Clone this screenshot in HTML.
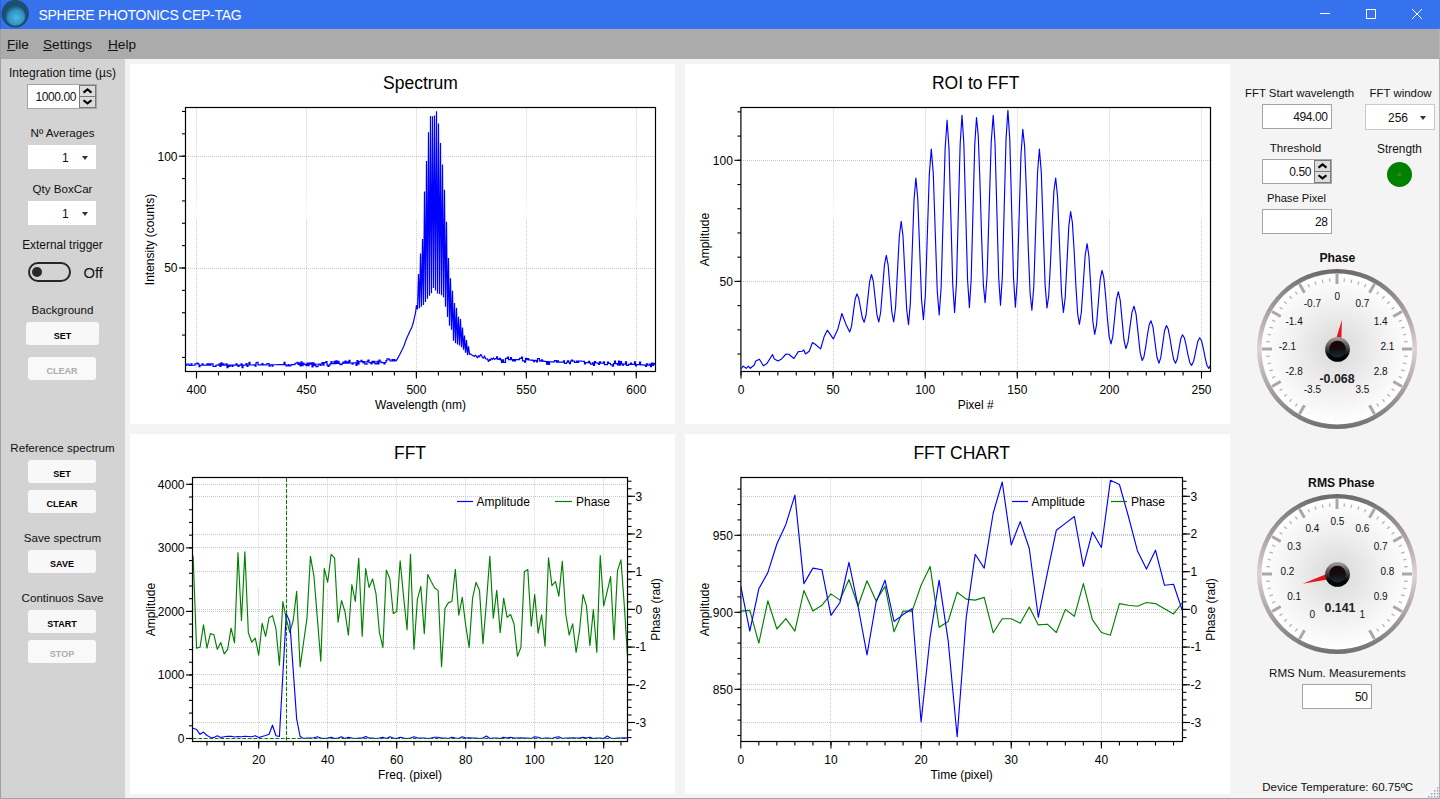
<!DOCTYPE html><html><head><meta charset="utf-8"><title>SPHERE PHOTONICS CEP-TAG</title><style>
*{margin:0;padding:0;box-sizing:border-box}
html,body{width:1440px;height:799px;overflow:hidden;background:#f3f3f3;font-family:"Liberation Sans",sans-serif}
.a{position:absolute}
.lbl{position:absolute;font-size:12px;color:#111;white-space:nowrap;line-height:14px}
.inp{position:absolute;background:#fff;border:1px solid #a4a4a4;font-size:12px;color:#111;text-align:right;line-height:24.5px;padding-right:3.5px;letter-spacing:-0.4px}
.cmb{position:absolute;background:#fff;font-size:12px;color:#111;line-height:24px}
.btn{position:absolute;background:#f8f8f8;border-radius:3px;font-size:9px;font-weight:bold;color:#000;text-align:center;line-height:29.4px;overflow:hidden}
.dis{color:#acacac;background:#f9f9f9}
.tri{position:absolute;width:0;height:0;border-left:3.7px solid transparent;border-right:3.7px solid transparent;border-top:4.4px solid #333}
</style></head><body>
<div class="a" style="left:0;top:0;width:1440px;height:29px;background:#3672ee"></div>
<div class="a" style="left:38.5px;top:6.5px;font-size:14px;color:#fff;white-space:nowrap;letter-spacing:-0.28px">SPHERE PHOTONICS CEP-TAG</div>
<div class="a" style="left:0;top:29px;width:1440px;height:30px;background:#ababab"></div>
<div class="a" style="left:7px;top:36.6px;font-size:13.6px;color:#111;white-space:nowrap"><u>F</u>ile</div>
<div class="a" style="left:43px;top:36.6px;font-size:13.6px;color:#111;white-space:nowrap"><u>S</u>ettings</div>
<div class="a" style="left:108px;top:36.6px;font-size:13.6px;color:#111;white-space:nowrap"><u>H</u>elp</div>
<div class="a" style="left:0;top:59px;width:125px;height:740px;background:#d3d3d3"></div>
<div class="a" style="left:130px;top:64px;width:545px;height:360px;background:#fff"></div>
<div class="a" style="left:685px;top:64px;width:545px;height:360px;background:#fff"></div>
<div class="a" style="left:130px;top:434px;width:545px;height:360px;background:#fff"></div>
<div class="a" style="left:685px;top:434px;width:545px;height:360px;background:#fff"></div>
<div class="a" style="left:1230px;top:59px;width:210px;height:740px;background:#f4f4f4"></div>
<div class="lbl" style="left:62.5px;top:65.9px;width:0;display:flex;justify-content:center;font-size:12px"><span>Integration time (µs)</span></div>
<div class="inp" style="left:27px;top:84px;width:53px;height:25px;border-right:none;padding-right:4px;line-height:24px">1000.00</div>
<div class="a" style="left:79px;top:84px;width:18px;height:25px;background:#a6a6a6"></div>
<div class="a" style="left:79px;top:85px;width:17px;height:23px;background:#dcdcdc;border:1px solid #7a7a7a"></div>
<div class="a" style="left:79px;top:96px;width:17px;height:1px;background:#7a7a7a"></div>
<div class="lbl" style="left:62.5px;top:126.4px;width:0;display:flex;justify-content:center;font-size:11.6px"><span>Nº Averages</span></div>
<div class="cmb" style="left:28px;top:145px;width:68px;height:24px"><span class="a" style="left:34px;top:0.5px">1</span></div>
<div class="tri" style="left:82px;top:156px"></div>
<div class="lbl" style="left:62.5px;top:181.8px;width:0;display:flex;justify-content:center;font-size:11.6px"><span>Qty BoxCar</span></div>
<div class="cmb" style="left:28px;top:201px;width:68px;height:24px"><span class="a" style="left:34px;top:0.5px">1</span></div>
<div class="tri" style="left:82px;top:212px"></div>
<div class="lbl" style="left:62.5px;top:238px;width:0;display:flex;justify-content:center;font-size:11.9px"><span>External trigger</span></div>
<div class="a" style="left:28px;top:262px;width:43px;height:20px;border:2px solid #262626;border-radius:10px"></div>
<div class="a" style="left:32px;top:267px;width:10px;height:10px;border-radius:5px;background:#2a2a2a"></div>
<div class="a" style="left:83.5px;top:264.5px;font-size:14.8px;color:#111;line-height:17px">Off</div>
<div class="lbl" style="left:62.5px;top:302.9px;width:0;display:flex;justify-content:center;font-size:11.6px"><span>Background</span></div>
<div class="btn" style="left:26px;top:322px;width:73px;height:23px">SET</div>
<div class="btn dis" style="left:28px;top:357px;width:68px;height:23px">CLEAR</div>
<div class="lbl" style="left:62.5px;top:441.2px;width:0;display:flex;justify-content:center;font-size:11.6px"><span>Reference spectrum</span></div>
<div class="btn" style="left:28px;top:460px;width:68px;height:23px">SET</div>
<div class="btn" style="left:28px;top:490px;width:68px;height:23px">CLEAR</div>
<div class="lbl" style="left:62.5px;top:530.9px;width:0;display:flex;justify-content:center;font-size:11.6px"><span>Save spectrum</span></div>
<div class="btn" style="left:28px;top:550px;width:68px;height:23px">SAVE</div>
<div class="lbl" style="left:62.5px;top:590.8px;width:0;display:flex;justify-content:center;font-size:11.6px"><span>Continuos Save</span></div>
<div class="btn" style="left:28px;top:610px;width:68px;height:23px">START</div>
<div class="btn dis" style="left:28px;top:640px;width:68px;height:23px">STOP</div>
<div class="lbl" style="left:1299.5px;top:85.8px;width:0;display:flex;justify-content:center;font-size:11.45px"><span>FFT Start wavelength</span></div>
<div class="inp" style="left:1262px;top:104px;width:70px;height:25px">494.00</div>
<div class="lbl" style="left:1400.5px;top:85.8px;width:0;display:flex;justify-content:center;font-size:11.45px"><span>FFT window</span></div>
<div class="cmb" style="left:1365px;top:104px;width:70px;height:26px;border:1px solid #c8c8c8;line-height:24px"><span class="a" style="left:22px;top:1px">256</span></div>
<div class="tri" style="left:1419.5px;top:116px"></div>
<div class="lbl" style="left:1295.5px;top:141.1px;width:0;display:flex;justify-content:center;font-size:11.6px"><span>Threshold</span></div>
<div class="inp" style="left:1262px;top:159px;width:53px;height:25px;border-right:none;padding-right:4px;line-height:24px">0.50</div>
<div class="a" style="left:1314px;top:159px;width:18px;height:25px;background:#a6a6a6"></div>
<div class="a" style="left:1314px;top:160px;width:17px;height:23px;background:#dcdcdc;border:1px solid #7a7a7a"></div>
<div class="a" style="left:1314px;top:171px;width:17px;height:1px;background:#7a7a7a"></div>
<div class="lbl" style="left:1399.5px;top:142.2px;width:0;display:flex;justify-content:center;font-size:11.85px"><span>Strength</span></div>
<div class="lbl" style="left:1296.5px;top:190.7px;width:0;display:flex;justify-content:center;font-size:11.2px"><span>Phase Pixel</span></div>
<div class="inp" style="left:1262px;top:209px;width:70px;height:25px">28</div>
<div class="lbl" style="left:1337.4px;top:665.9px;width:0;display:flex;justify-content:center;font-size:11.6px"><span>RMS Num. Measurements</span></div>
<div class="inp" style="left:1302px;top:684px;width:70px;height:25px">50</div>
<div class="lbl" style="left:1337.7px;top:780.4px;width:0;display:flex;justify-content:center;font-size:11.55px"><span>Device Temperature: 60.75ºC</span></div>
<svg class="a" style="left:0;top:0;font-family:&quot;Liberation Sans&quot;,sans-serif" width="1440" height="799" viewBox="0 0 1440 799">
<defs>
<linearGradient id="vg" x1="0" y1="0" x2="0" y2="1"><stop offset="0" stop-color="#e6e6e6"/><stop offset="0.7" stop-color="#eeeeee"/><stop offset="1" stop-color="#ffffff"/></linearGradient>
<linearGradient id="ring" x1="0" y1="0" x2="0" y2="1"><stop offset="0" stop-color="#6c6868"/><stop offset="0.5" stop-color="#dfd2d2"/><stop offset="1" stop-color="#707070"/></linearGradient>
<radialGradient id="face" cx="0.5" cy="0.5" r="0.5"><stop offset="0" stop-color="#d8d8d8"/><stop offset="0.55" stop-color="#efefef"/><stop offset="1" stop-color="#ffffff"/></radialGradient>
<linearGradient id="hubring" x1="0" y1="0" x2="0" y2="1"><stop offset="0" stop-color="#a8a2a2"/><stop offset="0.45" stop-color="#4a4545"/><stop offset="0.75" stop-color="#050505"/><stop offset="1" stop-color="#000"/></linearGradient>
<linearGradient id="hub" x1="0" y1="0" x2="0" y2="1"><stop offset="0" stop-color="#1a0305"/><stop offset="0.5" stop-color="#140c10"/><stop offset="1" stop-color="#1c2c38"/></linearGradient>
<radialGradient id="sph" cx="0.55" cy="0.6" r="0.55"><stop offset="0" stop-color="#4db6e0"/><stop offset="0.7" stop-color="#2f93c4"/><stop offset="1" stop-color="#1d5f86"/></radialGradient>
</defs>
<rect x="196" y="108" width="1" height="118.8" fill="url(#vg)"/><line x1="196.5" y1="219" x2="196.5" y2="371.5" stroke="#cfcfcf" stroke-width="1" stroke-dasharray="1 1" /><rect x="306" y="108" width="1" height="118.8" fill="url(#vg)"/><line x1="306.5" y1="219" x2="306.5" y2="371.5" stroke="#cfcfcf" stroke-width="1" stroke-dasharray="1 1" /><rect x="416" y="108" width="1" height="118.8" fill="url(#vg)"/><line x1="416.5" y1="219" x2="416.5" y2="371.5" stroke="#cfcfcf" stroke-width="1" stroke-dasharray="1 1" /><rect x="526" y="108" width="1" height="118.8" fill="url(#vg)"/><line x1="526.5" y1="219" x2="526.5" y2="371.5" stroke="#cfcfcf" stroke-width="1" stroke-dasharray="1 1" /><rect x="636" y="108" width="1" height="118.8" fill="url(#vg)"/><line x1="636.5" y1="219" x2="636.5" y2="371.5" stroke="#cfcfcf" stroke-width="1" stroke-dasharray="1 1" /><line x1="186" y1="268.5" x2="655.5" y2="268.5" stroke="#c8c8c8" stroke-width="1" stroke-dasharray="1 1" /><line x1="186" y1="156.5" x2="655.5" y2="156.5" stroke="#c8c8c8" stroke-width="1" stroke-dasharray="1 1" /><svg x="185.5" y="107.5" width="470" height="264" viewBox="185.5 107.5 470 264" overflow="hidden"><polyline fill="none" stroke="#0000ff" stroke-width="1.2" stroke-linejoin="miter" stroke-miterlimit="2" points="185,365.3 186,365.3 186,365.3 187,365.3 187,363.99 188,363.99 188,363.99 189,363.99 189,365.28 190,365.28 190,365.28 191,365.28 191,363.97 192,363.97 192,365.27 193,365.27 193,365.26 194,365.26 194,365.26 195,365.26 195,363.95 196,363.95 196,363.95 197,363.95 197,363.04 198,363.04 198,363.94 199,363.94 199,366.54 200,366.54 200,365.23 201,365.23 201,365.23 202,365.23 202,363.92 203,363.92 203,365.22 204,365.22 204,365.21 205,365.21 205,365.21 206,365.21 206,365.2 207,365.2 207,363.9 208,363.9 208,365.19 209,365.19 209,363.89 210,363.89 210,365.18 211,365.18 211,363.88 212,363.88 212,363.88 213,363.88 213,366.47 214,366.47 214,366.47 215,366.47 215,366.46 216,366.46 216,365.16 217,365.16 217,365.15 218,365.15 218,365.15 219,365.15 219,363.84 220,363.84 220,366.44 221,366.44 221,362.93 222,362.93 222,365.13 223,365.13 223,363.82 224,363.82 224,365.12 225,365.12 225,365.12 226,365.12 226,363.81 227,363.81 227,367.71 228,367.71 228,365.1 229,365.1 229,366.4 230,366.4 230,365.09 231,365.09 231,365.09 232,365.09 232,366.38 233,366.38 233,365.08 234,365.08 234,365.07 235,365.07 235,365.07 236,365.07 236,363.76 237,363.76 237,365.06 238,365.06 238,366.36 239,366.36 239,365.05 240,365.05 240,365.05 241,365.05 241,363.74 242,363.74 242,367.64 243,367.64 243,365.03 244,365.03 244,365.03 245,365.03 245,365.02 246,365.02 246,363.72 247,363.72 247,366.31 248,366.31 248,365.01 249,365.01 249,362.4 250,362.4 250,365 251,365 251,364.99 252,364.99 252,364.98 253,364.98 253,364.97 254,364.97 254,364.96 255,364.96 255,366.25 256,366.25 256,362.74 257,362.74 257,362.33 258,362.33 258,364.92 259,364.92 259,364.91 260,364.91 260,364.9 261,364.9 261,364.89 262,364.89 262,363.58 263,363.58 263,364.87 264,364.87 264,364.86 265,364.86 265,364.85 266,364.85 266,364.84 267,364.84 267,363.53 268,363.53 268,363.52 269,363.52 269,366.11 270,366.11 270,364.8 271,364.8 271,364.79 272,364.79 272,366.08 273,366.08 273,364.77 274,364.77 274,364.76 275,364.76 275,364.75 276,364.75 276,364.74 277,364.74 277,364.73 278,364.73 278,364.72 279,364.72 279,364.71 280,364.71 280,364.7 281,364.7 281,364.69 282,364.69 282,364.68 283,364.68 283,364.67 284,364.67 284,362.46 285,362.46 285,364.65 286,364.65 286,365.94 287,365.94 287,365.93 288,365.93 288,364.62 289,364.62 289,365.91 290,365.91 290,365.9 291,365.9 291,364.59 292,364.59 292,364.58 293,364.58 293,364.57 294,364.57 294,364.56 295,364.56 295,363.25 296,363.25 296,363.24 297,363.24 297,362.33 298,362.33 298,364.52 299,364.52 299,363.21 300,363.21 300,365.8 301,365.8 301,361.88 302,361.88 302,365.75 303,365.75 303,363.13 304,363.13 304,364.41 305,364.41 305,364.38 306,364.38 306,365.66 307,365.66 307,363.04 308,363.04 308,365.61 309,365.61 309,362.99 310,362.99 310,364.27 311,364.27 311,362.94 312,362.94 312,366.82 313,366.82 313,362.9 314,362.9 314,365.47 315,365.47 315,364.15 316,364.15 316,366.73 317,366.73 317,366.7 318,366.7 318,364.08 319,364.08 319,364.06 320,364.06 320,365.33 321,365.33 321,364.01 322,364.01 322,362.69 323,362.69 323,365.26 324,365.26 324,362.64 325,362.64 325,362.62 326,362.62 326,361.69 327,361.69 327,365.17 328,365.17 328,366.45 329,366.45 329,365.12 330,365.12 330,363.8 331,363.8 331,361.56 332,361.56 332,363.72 333,363.72 333,363.68 334,363.68 334,361.44 335,361.44 335,363.6 336,363.6 336,360.96 337,360.96 337,363.52 338,363.52 338,361.28 339,361.28 339,363.44 340,363.44 340,364.7 341,364.7 341,364.66 342,364.66 342,363.32 343,363.32 343,361.98 344,361.98 344,363.24 345,363.24 345,361 346,361 346,363.16 347,363.16 347,361.82 348,361.82 348,363.08 349,363.08 349,360.44 350,360.44 350,363 351,363 351,362.99 352,362.99 352,364.27 353,364.27 353,362.96 354,362.96 354,362.94 355,362.94 355,362.93 356,362.93 356,365.51 357,365.51 357,360.7 358,360.7 358,364.19 359,364.19 359,361.57 360,361.57 360,361.56 361,361.56 361,360.24 362,360.24 362,361.53 363,361.53 363,362.81 364,362.81 364,361.5 365,361.5 365,364.09 366,364.09 366,364.07 367,364.07 367,361.46 368,361.46 368,360.14 369,360.14 369,362.73 370,362.73 370,362.71 371,362.71 371,364 372,364 372,361.39 373,361.39 373,362.67 374,362.67 374,361.36 375,361.36 375,363.94 376,363.94 376,363.93 377,363.93 377,361.31 378,361.31 378,363.9 379,363.9 379,359.99 380,359.99 380,361.27 381,361.27 381,362.56 382,362.56 382,362.54 383,362.54 383,362.53 384,362.53 384,363.81 385,363.81 385,362.5 386,362.5 386,360.7 387,360.7 387,358.9 388,358.9 388,358.8 389,358.8 389,359.7 390,359.7 390,361 391,361 391,361 392,361 392,359.7 393,359.7 393,361 394,361 394,359.7 395,359.7 395,361 396,361 396,361 396.5,360.5 397.5,358.64 398.5,356.79 399.5,354.93 400.5,353 401.5,351 402.5,349 403.5,347 404.5,344.2 405.5,341.4 406.5,338.83 407.5,336.5 408.5,334.17 409.5,332 410.5,330 411.5,328 412.5,325.25 413.5,321.75 414.5,317.33 415.5,313 416.5,305 417.5,309.43 418.5,274 419.5,308.29 420.5,253.5 421.5,306.85 422.5,239 423.5,304.94 424.5,191.47 425.5,302 426.5,161 427.5,298.73 428.5,132.2 429.5,295.78 430.5,116.02 431.5,293.24 432.5,116.32 433.5,287.92 434.5,115.56 435.5,290.55 436.5,111.36 437.5,293.5 438.5,123.53 439.5,294.1 440.5,143 441.5,295.3 442.5,164.55 443.5,297.37 444.5,189.69 445.5,306.67 446.5,221.82 447.5,317.05 448.5,258 449.5,325.8 450.5,278.2 451.5,329.71 452.5,290.7 453.5,340.81 454.5,302.97 455.5,343.3 456.5,307.72 457.5,344.45 458.5,316.67 459.5,345.55 460.5,319.02 461.5,347.19 462.5,327.61 463.5,349.83 464.5,335.62 465.5,352.81 466.5,340.03 467.5,355.09 468.5,346.41 469.5,354.15 470.5,353.9 471.5,354.79 472.5,355.41 473.5,355.83 474.5,356.22 475.5,355.1 476.5,356.54 477.5,357.98 478.5,355.59 479.5,357.14 480.5,354.78 481.5,355.02 482.5,357.87 483.5,358.12 484.5,355.77 485.5,358.62 486.5,358.85 487.5,359.08 488.5,361.79 489.5,359.23 490.5,360.56 491.5,357.99 492.5,359.33 493.5,358.06 494.5,359.39 495.5,358.7 496.5,358.7 496.5,356.74 497.5,356.74 497.5,359.19 498.5,359.19 498.5,359.43 499.5,359.43 499.5,358.38 500.5,358.38 500.5,359.8 501.5,359.8 501.5,362.39 502.5,362.39 502.5,359.78 503.5,359.78 503.5,362.37 504.5,362.37 504.5,362.36 505.5,362.36 505.5,358.46 506.5,358.46 506.5,358.45 507.5,358.45 507.5,357.14 508.5,357.14 508.5,359.73 509.5,359.73 509.5,359.72 510.5,359.72 510.5,357.52 511.5,357.52 511.5,359.71 512.5,359.71 512.5,361 513.5,361 513.5,359.69 514.5,359.69 514.5,360.98 515.5,360.98 515.5,359.68 516.5,359.68 516.5,359.67 517.5,359.67 517.5,359.66 518.5,359.66 518.5,359.65 519.5,359.65 519.5,358.34 520.5,358.34 520.5,358.34 521.5,358.34 521.5,357.03 522.5,357.03 522.5,360.92 523.5,360.92 523.5,360.91 524.5,360.91 524.5,362.2 525.5,362.2 525.5,358.35 526.5,358.35 526.5,359.74 527.5,359.74 527.5,358.53 528.5,358.53 528.5,359.92 529.5,359.92 529.5,360.01 530.5,360.01 530.5,360.11 531.5,360.11 531.5,360.2 532.5,360.2 532.5,360.29 533.5,360.29 533.5,361.68 534.5,361.68 534.5,360.47 535.5,360.47 535.5,360.57 536.5,360.57 536.5,361.96 537.5,361.96 537.5,358.55 538.5,358.55 538.5,358.64 539.5,358.64 539.5,360.93 540.5,360.93 540.5,361.03 541.5,361.03 541.5,359.82 542.5,359.82 542.5,361.21 543.5,361.21 543.5,361.3 544.5,361.3 544.5,361.39 545.5,361.39 545.5,361.49 546.5,361.49 546.5,364.18 547.5,364.18 547.5,361.67 548.5,361.67 548.5,364.36 549.5,364.36 549.5,361.85 550.5,361.85 550.5,361.91 551.5,361.91 551.5,361.93 552.5,361.93 552.5,361.95 553.5,361.95 553.5,361.97 554.5,361.97 554.5,360.69 555.5,360.69 555.5,360.71 556.5,360.71 556.5,362.03 557.5,362.03 557.5,360.75 558.5,360.75 558.5,362.07 559.5,362.07 559.5,362.09 560.5,362.09 560.5,362.11 561.5,362.11 561.5,362.13 562.5,362.13 562.5,362.15 563.5,362.15 563.5,360.87 564.5,360.87 564.5,363.49 565.5,363.49 565.5,363.51 566.5,363.51 566.5,362.23 567.5,362.23 567.5,360.95 568.5,360.95 568.5,362.27 569.5,362.27 569.5,363.59 570.5,363.59 570.5,361.01 571.5,361.01 571.5,360.13 572.5,360.13 572.5,361.05 573.5,361.05 573.5,361.07 574.5,361.07 574.5,362.39 575.5,362.39 575.5,362.41 576.5,362.41 576.5,361.13 577.5,361.13 577.5,362.45 578.5,362.45 578.5,361.17 579.5,361.17 579.5,361.19 580.5,361.19 580.5,361.21 581.5,361.21 581.5,361.25 582.5,361.25 582.5,361.27 583.5,361.27 583.5,361.31 584.5,361.31 584.5,363.94 585.5,363.94 585.5,362.67 586.5,362.67 586.5,362.69 587.5,362.69 587.5,362.73 588.5,362.73 588.5,361.45 589.5,361.45 589.5,362.79 590.5,362.79 590.5,364.12 591.5,364.12 591.5,364.15 592.5,364.15 592.5,362.88 593.5,362.88 593.5,365.51 594.5,365.51 594.5,361.63 595.5,361.63 595.5,362.97 596.5,362.97 596.5,363 597.5,363 597.5,363.03 598.5,363.03 598.5,364.36 599.5,364.36 599.5,361.79 600.5,361.79 600.5,363.12 601.5,363.12 601.5,363.15 602.5,363.15 602.5,363.19 603.5,363.19 603.5,361.92 604.5,361.92 604.5,364.56 605.5,364.56 605.5,364.59 606.5,364.59 606.5,364.63 607.5,364.63 607.5,362.06 608.5,362.06 608.5,363.4 609.5,363.4 609.5,363.43 610.5,363.43 610.5,364.77 611.5,364.77 611.5,364.8 612.5,364.8 612.5,366.14 613.5,366.14 613.5,363.57 614.5,363.57 614.5,361.01 615.5,361.01 615.5,363.64 616.5,363.64 616.5,363.68 617.5,363.68 617.5,365.01 618.5,365.01 618.5,361.15 619.5,361.15 619.5,365.08 620.5,365.08 620.5,361.63 621.5,361.63 621.5,363.88 622.5,363.88 622.5,365.23 623.5,365.23 623.5,363.98 624.5,363.98 624.5,364.03 625.5,364.03 625.5,361.88 626.5,361.88 626.5,365.43 627.5,365.43 627.5,365.49 628.5,365.49 628.5,364.24 629.5,364.24 629.5,364.29 630.5,364.29 630.5,363.04 631.5,363.04 631.5,364.39 632.5,364.39 632.5,364.44 633.5,364.44 633.5,364.49 634.5,364.49 634.5,361.95 635.5,361.95 635.5,365.9 636.5,365.9 636.5,364.65 637.5,364.65 637.5,364.7 638.5,364.7 638.5,364.75 639.5,364.75 639.5,362.2 640.5,362.2 640.5,364.85 641.5,364.85 641.5,364.91 642.5,364.91 642.5,364.96 643.5,364.96 643.5,365.01 644.5,365.01 644.5,365.06 645.5,365.06 645.5,366.41 646.5,366.41 646.5,363.86 647.5,363.86 647.5,365.21 648.5,365.21 648.5,365.27 649.5,365.27 649.5,364.02 650.5,364.02 650.5,366.67 651.5,366.67 651.5,363.22 652.5,363.22 652.5,365.47 653.5,365.47 653.5,363.32 654.5,363.32 654.5,364.27 655.5,364.27 655.5,365.6"/></svg><rect x="185.5" y="107.5" width="470" height="264" fill="none" stroke="#000" stroke-width="1.2"/><line x1="196.5" y1="371.5" x2="196.5" y2="375.5" stroke="#000" stroke-width="1.1" /><line x1="218.49" y1="371.5" x2="218.49" y2="375.5" stroke="#000" stroke-width="1.1" /><line x1="240.48" y1="371.5" x2="240.48" y2="375.5" stroke="#000" stroke-width="1.1" /><line x1="262.47" y1="371.5" x2="262.47" y2="375.5" stroke="#000" stroke-width="1.1" /><line x1="284.46" y1="371.5" x2="284.46" y2="375.5" stroke="#000" stroke-width="1.1" /><line x1="306.45" y1="371.5" x2="306.45" y2="375.5" stroke="#000" stroke-width="1.1" /><line x1="328.44" y1="371.5" x2="328.44" y2="375.5" stroke="#000" stroke-width="1.1" /><line x1="350.43" y1="371.5" x2="350.43" y2="375.5" stroke="#000" stroke-width="1.1" /><line x1="372.42" y1="371.5" x2="372.42" y2="375.5" stroke="#000" stroke-width="1.1" /><line x1="394.41" y1="371.5" x2="394.41" y2="375.5" stroke="#000" stroke-width="1.1" /><line x1="416.4" y1="371.5" x2="416.4" y2="375.5" stroke="#000" stroke-width="1.1" /><line x1="438.39" y1="371.5" x2="438.39" y2="375.5" stroke="#000" stroke-width="1.1" /><line x1="460.38" y1="371.5" x2="460.38" y2="375.5" stroke="#000" stroke-width="1.1" /><line x1="482.37" y1="371.5" x2="482.37" y2="375.5" stroke="#000" stroke-width="1.1" /><line x1="504.36" y1="371.5" x2="504.36" y2="375.5" stroke="#000" stroke-width="1.1" /><line x1="526.35" y1="371.5" x2="526.35" y2="375.5" stroke="#000" stroke-width="1.1" /><line x1="548.34" y1="371.5" x2="548.34" y2="375.5" stroke="#000" stroke-width="1.1" /><line x1="570.33" y1="371.5" x2="570.33" y2="375.5" stroke="#000" stroke-width="1.1" /><line x1="592.32" y1="371.5" x2="592.32" y2="375.5" stroke="#000" stroke-width="1.1" /><line x1="614.31" y1="371.5" x2="614.31" y2="375.5" stroke="#000" stroke-width="1.1" /><line x1="636.3" y1="371.5" x2="636.3" y2="375.5" stroke="#000" stroke-width="1.1" /><line x1="196.5" y1="371.5" x2="196.5" y2="378.5" stroke="#000" stroke-width="1.1" /><text x="196.5" y="393.5" font-size="12" text-anchor="middle" fill="#000" font-weight="normal" >400</text><line x1="306.45" y1="371.5" x2="306.45" y2="378.5" stroke="#000" stroke-width="1.1" /><text x="306.45" y="393.5" font-size="12" text-anchor="middle" fill="#000" font-weight="normal" >450</text><line x1="416.4" y1="371.5" x2="416.4" y2="378.5" stroke="#000" stroke-width="1.1" /><text x="416.4" y="393.5" font-size="12" text-anchor="middle" fill="#000" font-weight="normal" >500</text><line x1="526.35" y1="371.5" x2="526.35" y2="378.5" stroke="#000" stroke-width="1.1" /><text x="526.35" y="393.5" font-size="12" text-anchor="middle" fill="#000" font-weight="normal" >550</text><line x1="636.3" y1="371.5" x2="636.3" y2="378.5" stroke="#000" stroke-width="1.1" /><text x="636.3" y="393.5" font-size="12" text-anchor="middle" fill="#000" font-weight="normal" >600</text><line x1="182" y1="357.44" x2="185.5" y2="357.44" stroke="#000" stroke-width="1.1" /><line x1="182" y1="335.08" x2="185.5" y2="335.08" stroke="#000" stroke-width="1.1" /><line x1="182" y1="312.72" x2="185.5" y2="312.72" stroke="#000" stroke-width="1.1" /><line x1="182" y1="290.36" x2="185.5" y2="290.36" stroke="#000" stroke-width="1.1" /><line x1="182" y1="268" x2="185.5" y2="268" stroke="#000" stroke-width="1.1" /><line x1="182" y1="245.64" x2="185.5" y2="245.64" stroke="#000" stroke-width="1.1" /><line x1="182" y1="223.28" x2="185.5" y2="223.28" stroke="#000" stroke-width="1.1" /><line x1="182" y1="200.92" x2="185.5" y2="200.92" stroke="#000" stroke-width="1.1" /><line x1="182" y1="178.56" x2="185.5" y2="178.56" stroke="#000" stroke-width="1.1" /><line x1="182" y1="156.2" x2="185.5" y2="156.2" stroke="#000" stroke-width="1.1" /><line x1="182" y1="133.84" x2="185.5" y2="133.84" stroke="#000" stroke-width="1.1" /><line x1="182" y1="111.48" x2="185.5" y2="111.48" stroke="#000" stroke-width="1.1" /><line x1="179" y1="268" x2="185.5" y2="268" stroke="#000" stroke-width="1.1" /><text x="177.5" y="272.3" font-size="12" text-anchor="end" fill="#000" font-weight="normal" >50</text><line x1="179" y1="156.2" x2="185.5" y2="156.2" stroke="#000" stroke-width="1.1" /><text x="177.5" y="160.5" font-size="12" text-anchor="end" fill="#000" font-weight="normal" >100</text><text x="420.5" y="89" font-size="17.5" text-anchor="middle" fill="#000" font-weight="normal" >Spectrum</text><text x="420.5" y="408.8" font-size="12" text-anchor="middle" fill="#000" font-weight="normal" >Wavelength (nm)</text><text x="154" y="239.5" font-size="12" text-anchor="middle" fill="#000" font-weight="normal" transform="rotate(-90 154 239.5)">Intensity (counts)</text><rect x="833" y="108" width="1" height="118.8" fill="url(#vg)"/><line x1="833.5" y1="219" x2="833.5" y2="371.5" stroke="#cfcfcf" stroke-width="1" stroke-dasharray="1 1" /><rect x="925" y="108" width="1" height="118.8" fill="url(#vg)"/><line x1="925.5" y1="219" x2="925.5" y2="371.5" stroke="#cfcfcf" stroke-width="1" stroke-dasharray="1 1" /><rect x="1017" y="108" width="1" height="118.8" fill="url(#vg)"/><line x1="1017.5" y1="219" x2="1017.5" y2="371.5" stroke="#cfcfcf" stroke-width="1" stroke-dasharray="1 1" /><rect x="1109" y="108" width="1" height="118.8" fill="url(#vg)"/><line x1="1109.5" y1="219" x2="1109.5" y2="371.5" stroke="#cfcfcf" stroke-width="1" stroke-dasharray="1 1" /><rect x="1201" y="108" width="1" height="118.8" fill="url(#vg)"/><line x1="1201.5" y1="219" x2="1201.5" y2="371.5" stroke="#cfcfcf" stroke-width="1" stroke-dasharray="1 1" /><line x1="741" y1="281.5" x2="1210.5" y2="281.5" stroke="#c8c8c8" stroke-width="1" stroke-dasharray="1 1" /><line x1="741" y1="160.5" x2="1210.5" y2="160.5" stroke="#c8c8c8" stroke-width="1" stroke-dasharray="1 1" /><svg x="740.9" y="107.5" width="469.6" height="264" viewBox="740.9 107.5 469.6 264" overflow="hidden"><polyline fill="none" stroke="#0000ff" stroke-width="1.15" stroke-linejoin="round" points="741.3,368.8 743.1,366.1 746.2,368.3 748.4,366.1 750.3,368.3 754,365.2 755.8,361 759.4,359.2 763.4,365.8 767,363.4 772.5,354.5 774.3,358.9 778,361 781.6,358.9 786.1,354 788.8,354.3 793.9,358.5 798.3,351.6 802.5,351.2 803.7,349.8 805.5,354 809.2,351.2 812.5,342.5 815.2,344.3 820.6,348.9 824.3,336.2 827.3,330.2 833.3,338.9 837.9,328.9 841.9,313.5 846,324.4 849.7,332 851.5,326.42 853.3,312.95 855.1,299.48 856.9,293.9 858.73,298.04 860.55,308.05 862.38,318.06 864.2,322.2 866.03,315.21 867.85,298.35 869.67,281.49 871.5,274.5 873.33,281.46 875.15,298.25 876.97,315.04 878.8,322 880.67,312.25 882.55,288.7 884.42,265.15 886.3,255.4 888.15,265.15 890,288.7 891.85,312.25 893.7,322 895.58,307.25 897.45,271.65 899.33,236.05 901.2,221.3 903.03,236.43 904.85,272.95 906.67,309.47 908.5,324.6 910.35,303.13 912.2,251.3 914.05,199.47 915.9,178 917.77,198.75 919.65,248.85 921.52,298.95 923.4,319.7 925.38,294.72 927.35,234.4 929.32,174.08 931.3,149.1 933.27,173.4 935.25,232.05 937.23,290.7 939.2,315 941.18,286.47 943.15,217.6 945.12,148.73 947.1,120.2 948.98,148.35 950.85,216.3 952.73,284.25 954.6,312.4 956.45,283.55 958.3,213.9 960.15,144.25 962,115.4 963.85,143.55 965.7,211.5 967.55,279.45 969.4,307.6 971.17,279.76 972.95,212.55 974.73,145.34 976.5,117.5 978.22,135.19 979.94,181.49 981.66,238.71 983.38,285.01 985.1,302.7 987.12,275.27 989.15,209.05 991.18,142.83 993.2,115.4 995.03,143.21 996.85,210.35 998.67,277.49 1000.5,305.3 1002.35,276.74 1004.2,207.8 1006.05,138.86 1007.9,110.3 1009.77,139.12 1011.65,208.7 1013.52,278.28 1015.4,307.1 1017.25,281.08 1019.1,218.25 1020.95,155.42 1022.8,129.4 1024.62,146.67 1026.44,191.9 1028.26,247.8 1030.08,293.03 1031.9,310.3 1033.78,286.69 1035.65,229.7 1037.53,172.71 1039.4,149.1 1041.3,172.37 1043.2,228.55 1045.1,284.73 1047,308 1048.74,295.59 1050.48,263.09 1052.22,222.91 1053.96,190.41 1055.7,178 1057.62,197.68 1059.55,245.2 1061.48,292.72 1063.4,312.4 1065.2,297.64 1067,262 1068.8,226.36 1070.6,211.6 1072.36,222.36 1074.12,250.54 1075.88,285.36 1077.64,313.54 1079.4,324.3 1081.33,312.5 1083.25,284 1085.17,255.5 1087.1,243.7 1089,256.97 1090.9,289 1092.8,321.03 1094.7,334.3 1096.53,324.93 1098.35,302.3 1100.17,279.67 1102,270.3 1103.8,277.33 1105.6,295.73 1107.4,318.47 1109.2,336.87 1111,343.9 1112.83,336.26 1114.65,317.8 1116.47,299.34 1118.3,291.7 1120.2,300.02 1122.1,320.1 1124,340.18 1125.9,348.5 1127.93,342.31 1129.95,327.35 1131.97,312.39 1134,306.2 1136.05,314.15 1138.1,333.35 1140.15,352.55 1142.2,360.5 1143.96,356.71 1145.72,346.78 1147.48,334.52 1149.24,324.59 1151,320.8 1152.97,327.01 1154.95,342 1156.93,356.99 1158.9,363.2 1160.78,357.68 1162.65,344.35 1164.53,331.02 1166.4,325.5 1168.22,329.1 1170.04,338.53 1171.86,350.17 1173.68,359.6 1175.5,363.2 1177.25,359.04 1179,349 1180.75,338.96 1182.5,334.8 1184.32,337.72 1186.14,345.37 1187.96,354.83 1189.78,362.48 1191.6,365.4 1193.62,361.36 1195.65,351.6 1197.67,341.84 1199.7,337.8 1201.52,340.72 1203.34,348.37 1205.16,357.83 1206.98,365.48 1208.8,368.4 1209.4,367.1 1210,365.8"/></svg><rect x="740.9" y="107.5" width="469.6" height="264" fill="none" stroke="#000" stroke-width="1.2"/><line x1="741" y1="371.5" x2="741" y2="375.5" stroke="#000" stroke-width="1.1" /><line x1="759.42" y1="371.5" x2="759.42" y2="375.5" stroke="#000" stroke-width="1.1" /><line x1="777.84" y1="371.5" x2="777.84" y2="375.5" stroke="#000" stroke-width="1.1" /><line x1="796.26" y1="371.5" x2="796.26" y2="375.5" stroke="#000" stroke-width="1.1" /><line x1="814.68" y1="371.5" x2="814.68" y2="375.5" stroke="#000" stroke-width="1.1" /><line x1="833.1" y1="371.5" x2="833.1" y2="375.5" stroke="#000" stroke-width="1.1" /><line x1="851.52" y1="371.5" x2="851.52" y2="375.5" stroke="#000" stroke-width="1.1" /><line x1="869.94" y1="371.5" x2="869.94" y2="375.5" stroke="#000" stroke-width="1.1" /><line x1="888.36" y1="371.5" x2="888.36" y2="375.5" stroke="#000" stroke-width="1.1" /><line x1="906.78" y1="371.5" x2="906.78" y2="375.5" stroke="#000" stroke-width="1.1" /><line x1="925.2" y1="371.5" x2="925.2" y2="375.5" stroke="#000" stroke-width="1.1" /><line x1="943.62" y1="371.5" x2="943.62" y2="375.5" stroke="#000" stroke-width="1.1" /><line x1="962.04" y1="371.5" x2="962.04" y2="375.5" stroke="#000" stroke-width="1.1" /><line x1="980.46" y1="371.5" x2="980.46" y2="375.5" stroke="#000" stroke-width="1.1" /><line x1="998.88" y1="371.5" x2="998.88" y2="375.5" stroke="#000" stroke-width="1.1" /><line x1="1017.3" y1="371.5" x2="1017.3" y2="375.5" stroke="#000" stroke-width="1.1" /><line x1="1035.72" y1="371.5" x2="1035.72" y2="375.5" stroke="#000" stroke-width="1.1" /><line x1="1054.14" y1="371.5" x2="1054.14" y2="375.5" stroke="#000" stroke-width="1.1" /><line x1="1072.56" y1="371.5" x2="1072.56" y2="375.5" stroke="#000" stroke-width="1.1" /><line x1="1090.98" y1="371.5" x2="1090.98" y2="375.5" stroke="#000" stroke-width="1.1" /><line x1="1109.4" y1="371.5" x2="1109.4" y2="375.5" stroke="#000" stroke-width="1.1" /><line x1="1127.82" y1="371.5" x2="1127.82" y2="375.5" stroke="#000" stroke-width="1.1" /><line x1="1146.24" y1="371.5" x2="1146.24" y2="375.5" stroke="#000" stroke-width="1.1" /><line x1="1164.66" y1="371.5" x2="1164.66" y2="375.5" stroke="#000" stroke-width="1.1" /><line x1="1183.08" y1="371.5" x2="1183.08" y2="375.5" stroke="#000" stroke-width="1.1" /><line x1="1201.5" y1="371.5" x2="1201.5" y2="375.5" stroke="#000" stroke-width="1.1" /><line x1="741" y1="371.5" x2="741" y2="378.5" stroke="#000" stroke-width="1.1" /><text x="741" y="393.5" font-size="12" text-anchor="middle" fill="#000" font-weight="normal" >0</text><line x1="833.1" y1="371.5" x2="833.1" y2="378.5" stroke="#000" stroke-width="1.1" /><text x="833.1" y="393.5" font-size="12" text-anchor="middle" fill="#000" font-weight="normal" >50</text><line x1="925.2" y1="371.5" x2="925.2" y2="378.5" stroke="#000" stroke-width="1.1" /><text x="925.2" y="393.5" font-size="12" text-anchor="middle" fill="#000" font-weight="normal" >100</text><line x1="1017.3" y1="371.5" x2="1017.3" y2="378.5" stroke="#000" stroke-width="1.1" /><text x="1017.3" y="393.5" font-size="12" text-anchor="middle" fill="#000" font-weight="normal" >150</text><line x1="1109.4" y1="371.5" x2="1109.4" y2="378.5" stroke="#000" stroke-width="1.1" /><text x="1109.4" y="393.5" font-size="12" text-anchor="middle" fill="#000" font-weight="normal" >200</text><line x1="1201.5" y1="371.5" x2="1201.5" y2="378.5" stroke="#000" stroke-width="1.1" /><text x="1201.5" y="393.5" font-size="12" text-anchor="middle" fill="#000" font-weight="normal" >250</text><line x1="737.4" y1="354.06" x2="740.9" y2="354.06" stroke="#000" stroke-width="1.1" /><line x1="737.4" y1="329.84" x2="740.9" y2="329.84" stroke="#000" stroke-width="1.1" /><line x1="737.4" y1="305.62" x2="740.9" y2="305.62" stroke="#000" stroke-width="1.1" /><line x1="737.4" y1="281.4" x2="740.9" y2="281.4" stroke="#000" stroke-width="1.1" /><line x1="737.4" y1="257.18" x2="740.9" y2="257.18" stroke="#000" stroke-width="1.1" /><line x1="737.4" y1="232.96" x2="740.9" y2="232.96" stroke="#000" stroke-width="1.1" /><line x1="737.4" y1="208.74" x2="740.9" y2="208.74" stroke="#000" stroke-width="1.1" /><line x1="737.4" y1="184.52" x2="740.9" y2="184.52" stroke="#000" stroke-width="1.1" /><line x1="737.4" y1="160.3" x2="740.9" y2="160.3" stroke="#000" stroke-width="1.1" /><line x1="737.4" y1="136.08" x2="740.9" y2="136.08" stroke="#000" stroke-width="1.1" /><line x1="737.4" y1="111.86" x2="740.9" y2="111.86" stroke="#000" stroke-width="1.1" /><line x1="734.4" y1="281.4" x2="740.9" y2="281.4" stroke="#000" stroke-width="1.1" /><text x="732.9" y="285.7" font-size="12" text-anchor="end" fill="#000" font-weight="normal" >50</text><line x1="734.4" y1="160.3" x2="740.9" y2="160.3" stroke="#000" stroke-width="1.1" /><text x="732.9" y="164.6" font-size="12" text-anchor="end" fill="#000" font-weight="normal" >100</text><text x="975.7" y="89" font-size="17.5" text-anchor="middle" fill="#000" font-weight="normal" >ROI to FFT</text><text x="975.7" y="408.8" font-size="12" text-anchor="middle" fill="#000" font-weight="normal" >Pixel #</text><text x="709" y="239.5" font-size="12" text-anchor="middle" fill="#000" font-weight="normal" transform="rotate(-90 709 239.5)">Amplitude</text><rect x="258" y="478" width="1" height="118.8" fill="url(#vg)"/><line x1="258.5" y1="589" x2="258.5" y2="741.5" stroke="#cfcfcf" stroke-width="1" stroke-dasharray="1 1" /><rect x="327" y="478" width="1" height="118.8" fill="url(#vg)"/><line x1="327.5" y1="589" x2="327.5" y2="741.5" stroke="#cfcfcf" stroke-width="1" stroke-dasharray="1 1" /><rect x="396" y="478" width="1" height="118.8" fill="url(#vg)"/><line x1="396.5" y1="589" x2="396.5" y2="741.5" stroke="#cfcfcf" stroke-width="1" stroke-dasharray="1 1" /><rect x="465" y="478" width="1" height="118.8" fill="url(#vg)"/><line x1="465.5" y1="589" x2="465.5" y2="741.5" stroke="#cfcfcf" stroke-width="1" stroke-dasharray="1 1" /><rect x="534" y="478" width="1" height="118.8" fill="url(#vg)"/><line x1="534.5" y1="589" x2="534.5" y2="741.5" stroke="#cfcfcf" stroke-width="1" stroke-dasharray="1 1" /><rect x="603" y="478" width="1" height="118.8" fill="url(#vg)"/><line x1="603.5" y1="589" x2="603.5" y2="741.5" stroke="#cfcfcf" stroke-width="1" stroke-dasharray="1 1" /><line x1="193" y1="738.5" x2="627.5" y2="738.5" stroke="#c8c8c8" stroke-width="1" stroke-dasharray="1 1" /><line x1="193" y1="674.5" x2="627.5" y2="674.5" stroke="#c8c8c8" stroke-width="1" stroke-dasharray="1 1" /><line x1="193" y1="611.5" x2="627.5" y2="611.5" stroke="#c8c8c8" stroke-width="1" stroke-dasharray="1 1" /><line x1="193" y1="547.5" x2="627.5" y2="547.5" stroke="#c8c8c8" stroke-width="1" stroke-dasharray="1 1" /><line x1="193" y1="484.5" x2="627.5" y2="484.5" stroke="#c8c8c8" stroke-width="1" stroke-dasharray="1 1" /><line x1="193" y1="722.5" x2="627.5" y2="722.5" stroke="#c8c8c8" stroke-width="1" stroke-dasharray="1 1" /><line x1="193" y1="684.5" x2="627.5" y2="684.5" stroke="#c8c8c8" stroke-width="1" stroke-dasharray="1 1" /><line x1="193" y1="647.5" x2="627.5" y2="647.5" stroke="#c8c8c8" stroke-width="1" stroke-dasharray="1 1" /><line x1="193" y1="609.5" x2="627.5" y2="609.5" stroke="#c8c8c8" stroke-width="1" stroke-dasharray="1 1" /><line x1="193" y1="571.5" x2="627.5" y2="571.5" stroke="#c8c8c8" stroke-width="1" stroke-dasharray="1 1" /><line x1="193" y1="534.5" x2="627.5" y2="534.5" stroke="#c8c8c8" stroke-width="1" stroke-dasharray="1 1" /><line x1="193" y1="496.5" x2="627.5" y2="496.5" stroke="#c8c8c8" stroke-width="1" stroke-dasharray="1 1" /><svg x="192.5" y="477.5" width="435" height="264" viewBox="192.5 477.5 435 264" overflow="hidden"><polyline fill="none" stroke="#008000" stroke-width="1.15" stroke-linejoin="round" points="189.7,545 193.15,557.1 196.6,648.2 200.05,647.1 203.5,624.9 206.95,648.2 210.4,633.6 213.85,634.7 217.3,649.3 220.75,642.5 224.2,653.9 227.65,649.3 231.1,628.2 234.55,642.8 238,552.7 241.45,620.5 244.9,551.9 248.35,632.7 251.8,642.2 255.25,638.1 258.7,655.2 262.15,623.3 265.6,636.3 269.05,617.8 272.5,615.7 275.95,628.7 279.4,665.3 282.85,601.5 286.3,618.9 289.75,632.4 293.2,620.5 296.65,591.3 300.1,666.9 303.55,642.5 307,618.1 310.45,556.3 313.9,575.8 317.35,618.1 320.8,661.2 324.25,568.5 327.7,582.3 331.15,554.3 334.6,558.2 338.05,622.2 341.5,600.5 344.95,611.6 348.4,635.2 351.85,584.7 355.3,601.5 358.75,558.2 362.2,636.3 365.65,568.5 369.1,587.5 372.55,579 376,593.7 379.45,632.7 382.9,647.4 386.35,570.1 389.8,578.7 393.25,613.5 396.7,611.6 400.15,560.8 403.6,596.9 407.05,629.8 410.5,554.3 413.95,649.3 417.4,599.4 420.85,586.4 424.3,633.6 427.75,574.5 431.2,581.5 434.65,588 438.1,590.4 441.55,666.6 445,608.3 448.45,602.6 451.9,601.5 455.35,569.3 458.8,615.2 462.25,597.3 465.7,625.4 469.15,647.4 472.6,597.8 476.05,582.3 479.5,590.4 482.95,643.8 486.4,602.6 489.85,556.3 493.3,618.1 496.75,590.4 500.2,632.7 503.65,598.2 507.1,617.3 510.55,614.5 514,623.8 517.45,656.3 520.9,647.4 524.35,571.7 527.8,569.6 531.25,626.2 534.7,594.5 538.15,633.1 541.6,614.8 545.05,646.1 548.5,557.9 551.95,585.6 555.4,581.5 558.85,596.1 562.3,561.2 565.75,614 569.2,635.2 572.65,623.8 576.1,652.3 579.55,630.3 583,594.5 586.45,605.9 589.9,645.8 593.35,609.6 596.8,652.3 600.25,555.5 603.7,605.9 607.15,591.7 610.6,576.6 614.05,639.6 617.5,570.6 620.95,559.9 624.4,606.7 627.85,662"/><polyline fill="none" stroke="#0000ff" stroke-width="1.15" stroke-linejoin="round" points="189.7,728 193.15,728.2 196.6,729.5 200.05,734.3 203.5,732.1 206.95,735.5 210.4,737.2 213.85,737.5 217.3,735.8 220.75,737.5 224.2,736.8 227.65,736.3 231.1,736.3 234.55,737 238,736.5 241.45,736.8 244.9,736.3 248.35,736.5 251.8,736.8 255.25,735.7 258.7,737.6 262.15,736.5 265.6,735.5 269.05,734.3 272.5,725.2 275.95,735.7 279.4,736.5 282.85,675 286.3,613.6 289.75,621.8 293.2,670 296.65,718.9 300.1,736.5 303.55,738.5 307,738 310.45,738 313.9,737.7 317.35,736.8 320.8,738 324.25,738.5 327.7,738 331.15,737.2 334.6,738.5 338.05,738 341.5,736.8 344.95,738.5 348.4,737.2 351.85,738 355.3,738.5 358.75,738 362.2,738 365.65,736.5 369.1,738 372.55,738 376,738.5 379.45,738 382.9,737.2 386.35,738.5 389.8,736.8 393.25,738 396.7,738.5 400.15,737.2 403.6,738 407.05,738.5 410.5,738 413.95,736.8 417.4,737.7 420.85,738 424.3,738 427.75,738.5 431.2,738 434.65,737.2 438.1,737.3 441.55,738 445,738 448.45,738.5 451.9,737.2 455.35,738 458.8,738.5 462.25,736.8 465.7,738 469.15,737.7 472.6,738 476.05,738 479.5,738.5 482.95,738 486.4,736 489.85,738.5 493.3,738 496.75,738 500.2,738.5 503.65,737.2 507.1,738 510.55,737.3 514,738 517.45,738 520.9,737.7 524.35,738 527.8,738 531.25,738.5 534.7,736.8 538.15,737.2 541.6,738.5 545.05,738 548.5,738 551.95,738.5 555.4,737.2 558.85,736.8 562.3,738.5 565.75,738 569.2,738 572.65,737.7 576.1,738 579.55,738 583,737.3 586.45,738 589.9,737.2 593.35,738.5 596.8,738 600.25,738 603.7,738.5 607.15,736 610.6,738 614.05,738.5 617.5,738 620.95,738 624.4,737.7 627.85,738"/><line x1="193" y1="738.5" x2="628" y2="738.5" stroke="#008000" stroke-width="1" stroke-dasharray="3.5 2"/><line x1="286.5" y1="478" x2="286.5" y2="741" stroke="#008000" stroke-width="1" stroke-dasharray="4 1.5"/></svg><rect x="192.5" y="477.5" width="435" height="264" fill="none" stroke="#000" stroke-width="1.2"/><line x1="206.95" y1="741.5" x2="206.95" y2="745.5" stroke="#000" stroke-width="1.1" /><line x1="224.2" y1="741.5" x2="224.2" y2="745.5" stroke="#000" stroke-width="1.1" /><line x1="241.45" y1="741.5" x2="241.45" y2="745.5" stroke="#000" stroke-width="1.1" /><line x1="258.7" y1="741.5" x2="258.7" y2="745.5" stroke="#000" stroke-width="1.1" /><line x1="275.95" y1="741.5" x2="275.95" y2="745.5" stroke="#000" stroke-width="1.1" /><line x1="293.2" y1="741.5" x2="293.2" y2="745.5" stroke="#000" stroke-width="1.1" /><line x1="310.45" y1="741.5" x2="310.45" y2="745.5" stroke="#000" stroke-width="1.1" /><line x1="327.7" y1="741.5" x2="327.7" y2="745.5" stroke="#000" stroke-width="1.1" /><line x1="344.95" y1="741.5" x2="344.95" y2="745.5" stroke="#000" stroke-width="1.1" /><line x1="362.2" y1="741.5" x2="362.2" y2="745.5" stroke="#000" stroke-width="1.1" /><line x1="379.45" y1="741.5" x2="379.45" y2="745.5" stroke="#000" stroke-width="1.1" /><line x1="396.7" y1="741.5" x2="396.7" y2="745.5" stroke="#000" stroke-width="1.1" /><line x1="413.95" y1="741.5" x2="413.95" y2="745.5" stroke="#000" stroke-width="1.1" /><line x1="431.2" y1="741.5" x2="431.2" y2="745.5" stroke="#000" stroke-width="1.1" /><line x1="448.45" y1="741.5" x2="448.45" y2="745.5" stroke="#000" stroke-width="1.1" /><line x1="465.7" y1="741.5" x2="465.7" y2="745.5" stroke="#000" stroke-width="1.1" /><line x1="482.95" y1="741.5" x2="482.95" y2="745.5" stroke="#000" stroke-width="1.1" /><line x1="500.2" y1="741.5" x2="500.2" y2="745.5" stroke="#000" stroke-width="1.1" /><line x1="517.45" y1="741.5" x2="517.45" y2="745.5" stroke="#000" stroke-width="1.1" /><line x1="534.7" y1="741.5" x2="534.7" y2="745.5" stroke="#000" stroke-width="1.1" /><line x1="551.95" y1="741.5" x2="551.95" y2="745.5" stroke="#000" stroke-width="1.1" /><line x1="569.2" y1="741.5" x2="569.2" y2="745.5" stroke="#000" stroke-width="1.1" /><line x1="586.45" y1="741.5" x2="586.45" y2="745.5" stroke="#000" stroke-width="1.1" /><line x1="603.7" y1="741.5" x2="603.7" y2="745.5" stroke="#000" stroke-width="1.1" /><line x1="620.95" y1="741.5" x2="620.95" y2="745.5" stroke="#000" stroke-width="1.1" /><line x1="258.7" y1="741.5" x2="258.7" y2="748.5" stroke="#000" stroke-width="1.1" /><text x="258.7" y="763.5" font-size="12" text-anchor="middle" fill="#000" font-weight="normal" >20</text><line x1="327.7" y1="741.5" x2="327.7" y2="748.5" stroke="#000" stroke-width="1.1" /><text x="327.7" y="763.5" font-size="12" text-anchor="middle" fill="#000" font-weight="normal" >40</text><line x1="396.7" y1="741.5" x2="396.7" y2="748.5" stroke="#000" stroke-width="1.1" /><text x="396.7" y="763.5" font-size="12" text-anchor="middle" fill="#000" font-weight="normal" >60</text><line x1="465.7" y1="741.5" x2="465.7" y2="748.5" stroke="#000" stroke-width="1.1" /><text x="465.7" y="763.5" font-size="12" text-anchor="middle" fill="#000" font-weight="normal" >80</text><line x1="534.7" y1="741.5" x2="534.7" y2="748.5" stroke="#000" stroke-width="1.1" /><text x="534.7" y="763.5" font-size="12" text-anchor="middle" fill="#000" font-weight="normal" >100</text><line x1="603.7" y1="741.5" x2="603.7" y2="748.5" stroke="#000" stroke-width="1.1" /><text x="603.7" y="763.5" font-size="12" text-anchor="middle" fill="#000" font-weight="normal" >120</text><line x1="189" y1="738.5" x2="192.5" y2="738.5" stroke="#000" stroke-width="1.1" /><line x1="189" y1="725.79" x2="192.5" y2="725.79" stroke="#000" stroke-width="1.1" /><line x1="189" y1="713.08" x2="192.5" y2="713.08" stroke="#000" stroke-width="1.1" /><line x1="189" y1="700.37" x2="192.5" y2="700.37" stroke="#000" stroke-width="1.1" /><line x1="189" y1="687.66" x2="192.5" y2="687.66" stroke="#000" stroke-width="1.1" /><line x1="189" y1="674.95" x2="192.5" y2="674.95" stroke="#000" stroke-width="1.1" /><line x1="189" y1="662.24" x2="192.5" y2="662.24" stroke="#000" stroke-width="1.1" /><line x1="189" y1="649.53" x2="192.5" y2="649.53" stroke="#000" stroke-width="1.1" /><line x1="189" y1="636.82" x2="192.5" y2="636.82" stroke="#000" stroke-width="1.1" /><line x1="189" y1="624.11" x2="192.5" y2="624.11" stroke="#000" stroke-width="1.1" /><line x1="189" y1="611.4" x2="192.5" y2="611.4" stroke="#000" stroke-width="1.1" /><line x1="189" y1="598.69" x2="192.5" y2="598.69" stroke="#000" stroke-width="1.1" /><line x1="189" y1="585.98" x2="192.5" y2="585.98" stroke="#000" stroke-width="1.1" /><line x1="189" y1="573.27" x2="192.5" y2="573.27" stroke="#000" stroke-width="1.1" /><line x1="189" y1="560.56" x2="192.5" y2="560.56" stroke="#000" stroke-width="1.1" /><line x1="189" y1="547.85" x2="192.5" y2="547.85" stroke="#000" stroke-width="1.1" /><line x1="189" y1="535.14" x2="192.5" y2="535.14" stroke="#000" stroke-width="1.1" /><line x1="189" y1="522.43" x2="192.5" y2="522.43" stroke="#000" stroke-width="1.1" /><line x1="189" y1="509.72" x2="192.5" y2="509.72" stroke="#000" stroke-width="1.1" /><line x1="189" y1="497.01" x2="192.5" y2="497.01" stroke="#000" stroke-width="1.1" /><line x1="189" y1="484.3" x2="192.5" y2="484.3" stroke="#000" stroke-width="1.1" /><line x1="186" y1="738.5" x2="192.5" y2="738.5" stroke="#000" stroke-width="1.1" /><text x="184.5" y="742.8" font-size="12" text-anchor="end" fill="#000" font-weight="normal" >0</text><line x1="186" y1="674.95" x2="192.5" y2="674.95" stroke="#000" stroke-width="1.1" /><text x="184.5" y="679.25" font-size="12" text-anchor="end" fill="#000" font-weight="normal" >1000</text><line x1="186" y1="611.4" x2="192.5" y2="611.4" stroke="#000" stroke-width="1.1" /><text x="184.5" y="615.7" font-size="12" text-anchor="end" fill="#000" font-weight="normal" >2000</text><line x1="186" y1="547.85" x2="192.5" y2="547.85" stroke="#000" stroke-width="1.1" /><text x="184.5" y="552.15" font-size="12" text-anchor="end" fill="#000" font-weight="normal" >3000</text><line x1="186" y1="484.3" x2="192.5" y2="484.3" stroke="#000" stroke-width="1.1" /><text x="184.5" y="488.6" font-size="12" text-anchor="end" fill="#000" font-weight="normal" >4000</text><line x1="627.5" y1="737.58" x2="631.5" y2="737.58" stroke="#000" stroke-width="1.1" /><line x1="627.5" y1="730.04" x2="631.5" y2="730.04" stroke="#000" stroke-width="1.1" /><line x1="627.5" y1="722.5" x2="631.5" y2="722.5" stroke="#000" stroke-width="1.1" /><line x1="627.5" y1="714.96" x2="631.5" y2="714.96" stroke="#000" stroke-width="1.1" /><line x1="627.5" y1="707.42" x2="631.5" y2="707.42" stroke="#000" stroke-width="1.1" /><line x1="627.5" y1="699.88" x2="631.5" y2="699.88" stroke="#000" stroke-width="1.1" /><line x1="627.5" y1="692.34" x2="631.5" y2="692.34" stroke="#000" stroke-width="1.1" /><line x1="627.5" y1="684.8" x2="631.5" y2="684.8" stroke="#000" stroke-width="1.1" /><line x1="627.5" y1="677.26" x2="631.5" y2="677.26" stroke="#000" stroke-width="1.1" /><line x1="627.5" y1="669.72" x2="631.5" y2="669.72" stroke="#000" stroke-width="1.1" /><line x1="627.5" y1="662.18" x2="631.5" y2="662.18" stroke="#000" stroke-width="1.1" /><line x1="627.5" y1="654.64" x2="631.5" y2="654.64" stroke="#000" stroke-width="1.1" /><line x1="627.5" y1="647.1" x2="631.5" y2="647.1" stroke="#000" stroke-width="1.1" /><line x1="627.5" y1="639.56" x2="631.5" y2="639.56" stroke="#000" stroke-width="1.1" /><line x1="627.5" y1="632.02" x2="631.5" y2="632.02" stroke="#000" stroke-width="1.1" /><line x1="627.5" y1="624.48" x2="631.5" y2="624.48" stroke="#000" stroke-width="1.1" /><line x1="627.5" y1="616.94" x2="631.5" y2="616.94" stroke="#000" stroke-width="1.1" /><line x1="627.5" y1="609.4" x2="631.5" y2="609.4" stroke="#000" stroke-width="1.1" /><line x1="627.5" y1="601.86" x2="631.5" y2="601.86" stroke="#000" stroke-width="1.1" /><line x1="627.5" y1="594.32" x2="631.5" y2="594.32" stroke="#000" stroke-width="1.1" /><line x1="627.5" y1="586.78" x2="631.5" y2="586.78" stroke="#000" stroke-width="1.1" /><line x1="627.5" y1="579.24" x2="631.5" y2="579.24" stroke="#000" stroke-width="1.1" /><line x1="627.5" y1="571.7" x2="631.5" y2="571.7" stroke="#000" stroke-width="1.1" /><line x1="627.5" y1="564.16" x2="631.5" y2="564.16" stroke="#000" stroke-width="1.1" /><line x1="627.5" y1="556.62" x2="631.5" y2="556.62" stroke="#000" stroke-width="1.1" /><line x1="627.5" y1="549.08" x2="631.5" y2="549.08" stroke="#000" stroke-width="1.1" /><line x1="627.5" y1="541.54" x2="631.5" y2="541.54" stroke="#000" stroke-width="1.1" /><line x1="627.5" y1="534" x2="631.5" y2="534" stroke="#000" stroke-width="1.1" /><line x1="627.5" y1="526.46" x2="631.5" y2="526.46" stroke="#000" stroke-width="1.1" /><line x1="627.5" y1="518.92" x2="631.5" y2="518.92" stroke="#000" stroke-width="1.1" /><line x1="627.5" y1="511.38" x2="631.5" y2="511.38" stroke="#000" stroke-width="1.1" /><line x1="627.5" y1="503.84" x2="631.5" y2="503.84" stroke="#000" stroke-width="1.1" /><line x1="627.5" y1="496.3" x2="631.5" y2="496.3" stroke="#000" stroke-width="1.1" /><line x1="627.5" y1="488.76" x2="631.5" y2="488.76" stroke="#000" stroke-width="1.1" /><line x1="627.5" y1="481.22" x2="631.5" y2="481.22" stroke="#000" stroke-width="1.1" /><line x1="627.5" y1="722.5" x2="635" y2="722.5" stroke="#000" stroke-width="1.1" /><text x="635.5" y="726.8" font-size="12" text-anchor="start" fill="#000" font-weight="normal" >-3</text><line x1="627.5" y1="684.8" x2="635" y2="684.8" stroke="#000" stroke-width="1.1" /><text x="635.5" y="689.1" font-size="12" text-anchor="start" fill="#000" font-weight="normal" >-2</text><line x1="627.5" y1="647.1" x2="635" y2="647.1" stroke="#000" stroke-width="1.1" /><text x="635.5" y="651.4" font-size="12" text-anchor="start" fill="#000" font-weight="normal" >-1</text><line x1="627.5" y1="609.4" x2="635" y2="609.4" stroke="#000" stroke-width="1.1" /><text x="635.5" y="613.7" font-size="12" text-anchor="start" fill="#000" font-weight="normal" >0</text><line x1="627.5" y1="571.7" x2="635" y2="571.7" stroke="#000" stroke-width="1.1" /><text x="635.5" y="576" font-size="12" text-anchor="start" fill="#000" font-weight="normal" >1</text><line x1="627.5" y1="534" x2="635" y2="534" stroke="#000" stroke-width="1.1" /><text x="635.5" y="538.3" font-size="12" text-anchor="start" fill="#000" font-weight="normal" >2</text><line x1="627.5" y1="496.3" x2="635" y2="496.3" stroke="#000" stroke-width="1.1" /><text x="635.5" y="500.6" font-size="12" text-anchor="start" fill="#000" font-weight="normal" >3</text><text x="410" y="459" font-size="17.5" text-anchor="middle" fill="#000" font-weight="normal" >FFT</text><text x="410" y="778.8" font-size="12" text-anchor="middle" fill="#000" font-weight="normal" >Freq. (pixel)</text><text x="155" y="609.5" font-size="12" text-anchor="middle" fill="#000" font-weight="normal" transform="rotate(-90 155 609.5)">Amplitude</text><text x="660" y="609.5" font-size="12" text-anchor="middle" fill="#000" font-weight="normal" transform="rotate(-90 660 609.5)">Phase (rad)</text><line x1="457" y1="501.5" x2="473" y2="501.5" stroke="#0000ff" stroke-width="1.2" /><text x="476.5" y="506" font-size="12" text-anchor="start" fill="#000" font-weight="normal" >Amplitude</text><line x1="555" y1="501.5" x2="572" y2="501.5" stroke="#008000" stroke-width="1.2" /><text x="576" y="506" font-size="12" text-anchor="start" fill="#000" font-weight="normal" >Phase</text><rect x="830" y="478" width="1" height="118.8" fill="url(#vg)"/><line x1="830.5" y1="589" x2="830.5" y2="741.5" stroke="#cfcfcf" stroke-width="1" stroke-dasharray="1 1" /><rect x="921" y="478" width="1" height="118.8" fill="url(#vg)"/><line x1="921.5" y1="589" x2="921.5" y2="741.5" stroke="#cfcfcf" stroke-width="1" stroke-dasharray="1 1" /><rect x="1011" y="478" width="1" height="118.8" fill="url(#vg)"/><line x1="1011.5" y1="589" x2="1011.5" y2="741.5" stroke="#cfcfcf" stroke-width="1" stroke-dasharray="1 1" /><rect x="1101" y="478" width="1" height="118.8" fill="url(#vg)"/><line x1="1101.5" y1="589" x2="1101.5" y2="741.5" stroke="#cfcfcf" stroke-width="1" stroke-dasharray="1 1" /><line x1="741" y1="689.5" x2="1182.5" y2="689.5" stroke="#c8c8c8" stroke-width="1" stroke-dasharray="1 1" /><line x1="741" y1="612.5" x2="1182.5" y2="612.5" stroke="#c8c8c8" stroke-width="1" stroke-dasharray="1 1" /><line x1="741" y1="535.5" x2="1182.5" y2="535.5" stroke="#c8c8c8" stroke-width="1" stroke-dasharray="1 1" /><line x1="741" y1="722.5" x2="1182.5" y2="722.5" stroke="#c8c8c8" stroke-width="1" stroke-dasharray="1 1" /><line x1="741" y1="684.5" x2="1182.5" y2="684.5" stroke="#c8c8c8" stroke-width="1" stroke-dasharray="1 1" /><line x1="741" y1="647.5" x2="1182.5" y2="647.5" stroke="#c8c8c8" stroke-width="1" stroke-dasharray="1 1" /><line x1="741" y1="609.5" x2="1182.5" y2="609.5" stroke="#c8c8c8" stroke-width="1" stroke-dasharray="1 1" /><line x1="741" y1="571.5" x2="1182.5" y2="571.5" stroke="#c8c8c8" stroke-width="1" stroke-dasharray="1 1" /><line x1="741" y1="534.5" x2="1182.5" y2="534.5" stroke="#c8c8c8" stroke-width="1" stroke-dasharray="1 1" /><line x1="741" y1="496.5" x2="1182.5" y2="496.5" stroke="#c8c8c8" stroke-width="1" stroke-dasharray="1 1" /><svg x="740.9" y="477.5" width="441.6" height="264" viewBox="740.9 477.5 441.6 264" overflow="hidden"><polyline fill="none" stroke="#008000" stroke-width="1.15" stroke-linejoin="round" points="740.8,611.1 749.81,610.4 758.83,643.1 767.84,600.8 776.86,629 785.88,618.7 794.89,631.1 803.9,590.5 812.92,611.1 821.93,605.3 830.95,593.9 839.96,600.1 848.98,579.5 858,606 867.01,580.8 876.02,600.8 885.04,586.4 894.05,631.8 903.07,611.1 912.09,611.1 921.1,585.3 930.12,566.4 939.13,627.3 948.14,621.5 957.16,592.2 966.17,599.1 975.19,600.1 984.2,597.4 993.22,632.8 1002.23,618.7 1011.25,618.7 1020.26,623.2 1029.28,607 1038.3,624.9 1047.31,624.2 1056.33,632.5 1065.34,609.4 1074.36,616.3 1083.37,583.6 1092.38,619.7 1101.4,632.5 1110.41,635.2 1119.43,603.6 1128.44,605.3 1137.46,606.3 1146.47,602.5 1155.49,603.6 1164.51,608.7 1173.52,613.9 1182.53,602.5"/><polyline fill="none" stroke="#0000ff" stroke-width="1.15" stroke-linejoin="round" points="740.8,586.4 749.81,631.1 758.83,588.8 767.84,572.6 776.86,544 785.88,524.4 794.89,495.1 803.9,583.6 812.92,568.1 821.93,569.8 830.95,615.3 839.96,602.5 848.98,562.3 858,606 867.01,654.9 876.02,602.5 885.04,580.2 894.05,621.5 903.07,614.6 912.09,608.7 921.1,722 930.12,637 939.13,580.2 948.14,640.4 957.16,736.8 966.17,618 975.19,554.3 984.2,568.1 993.22,513 1002.23,482 1011.25,545 1020.26,521.6 1029.28,548.5 1038.3,617.3 1047.31,573.3 1056.33,530.2 1065.34,523.4 1074.36,516.5 1083.37,566.4 1092.38,532 1101.4,547.5 1110.41,480.3 1119.43,484.5 1128.44,516.5 1137.46,550.9 1146.47,569.1 1155.49,550.2 1164.51,585.3 1173.52,584.3 1182.53,611.1"/></svg><rect x="740.9" y="477.5" width="441.6" height="264" fill="none" stroke="#000" stroke-width="1.2"/><line x1="758.83" y1="741.5" x2="758.83" y2="745.5" stroke="#000" stroke-width="1.1" /><line x1="776.86" y1="741.5" x2="776.86" y2="745.5" stroke="#000" stroke-width="1.1" /><line x1="794.89" y1="741.5" x2="794.89" y2="745.5" stroke="#000" stroke-width="1.1" /><line x1="812.92" y1="741.5" x2="812.92" y2="745.5" stroke="#000" stroke-width="1.1" /><line x1="830.95" y1="741.5" x2="830.95" y2="745.5" stroke="#000" stroke-width="1.1" /><line x1="848.98" y1="741.5" x2="848.98" y2="745.5" stroke="#000" stroke-width="1.1" /><line x1="867.01" y1="741.5" x2="867.01" y2="745.5" stroke="#000" stroke-width="1.1" /><line x1="885.04" y1="741.5" x2="885.04" y2="745.5" stroke="#000" stroke-width="1.1" /><line x1="903.07" y1="741.5" x2="903.07" y2="745.5" stroke="#000" stroke-width="1.1" /><line x1="921.1" y1="741.5" x2="921.1" y2="745.5" stroke="#000" stroke-width="1.1" /><line x1="939.13" y1="741.5" x2="939.13" y2="745.5" stroke="#000" stroke-width="1.1" /><line x1="957.16" y1="741.5" x2="957.16" y2="745.5" stroke="#000" stroke-width="1.1" /><line x1="975.19" y1="741.5" x2="975.19" y2="745.5" stroke="#000" stroke-width="1.1" /><line x1="993.22" y1="741.5" x2="993.22" y2="745.5" stroke="#000" stroke-width="1.1" /><line x1="1011.25" y1="741.5" x2="1011.25" y2="745.5" stroke="#000" stroke-width="1.1" /><line x1="1029.28" y1="741.5" x2="1029.28" y2="745.5" stroke="#000" stroke-width="1.1" /><line x1="1047.31" y1="741.5" x2="1047.31" y2="745.5" stroke="#000" stroke-width="1.1" /><line x1="1065.34" y1="741.5" x2="1065.34" y2="745.5" stroke="#000" stroke-width="1.1" /><line x1="1083.37" y1="741.5" x2="1083.37" y2="745.5" stroke="#000" stroke-width="1.1" /><line x1="1101.4" y1="741.5" x2="1101.4" y2="745.5" stroke="#000" stroke-width="1.1" /><line x1="1119.43" y1="741.5" x2="1119.43" y2="745.5" stroke="#000" stroke-width="1.1" /><line x1="1137.46" y1="741.5" x2="1137.46" y2="745.5" stroke="#000" stroke-width="1.1" /><line x1="1155.49" y1="741.5" x2="1155.49" y2="745.5" stroke="#000" stroke-width="1.1" /><line x1="1173.52" y1="741.5" x2="1173.52" y2="745.5" stroke="#000" stroke-width="1.1" /><line x1="740.8" y1="741.5" x2="740.8" y2="748.5" stroke="#000" stroke-width="1.1" /><text x="740.8" y="763.5" font-size="12" text-anchor="middle" fill="#000" font-weight="normal" >0</text><line x1="830.95" y1="741.5" x2="830.95" y2="748.5" stroke="#000" stroke-width="1.1" /><text x="830.95" y="763.5" font-size="12" text-anchor="middle" fill="#000" font-weight="normal" >10</text><line x1="921.1" y1="741.5" x2="921.1" y2="748.5" stroke="#000" stroke-width="1.1" /><text x="921.1" y="763.5" font-size="12" text-anchor="middle" fill="#000" font-weight="normal" >20</text><line x1="1011.25" y1="741.5" x2="1011.25" y2="748.5" stroke="#000" stroke-width="1.1" /><text x="1011.25" y="763.5" font-size="12" text-anchor="middle" fill="#000" font-weight="normal" >30</text><line x1="1101.4" y1="741.5" x2="1101.4" y2="748.5" stroke="#000" stroke-width="1.1" /><text x="1101.4" y="763.5" font-size="12" text-anchor="middle" fill="#000" font-weight="normal" >40</text><line x1="737.4" y1="735.5" x2="740.9" y2="735.5" stroke="#000" stroke-width="1.1" /><line x1="737.4" y1="720.1" x2="740.9" y2="720.1" stroke="#000" stroke-width="1.1" /><line x1="737.4" y1="704.7" x2="740.9" y2="704.7" stroke="#000" stroke-width="1.1" /><line x1="737.4" y1="689.3" x2="740.9" y2="689.3" stroke="#000" stroke-width="1.1" /><line x1="737.4" y1="673.9" x2="740.9" y2="673.9" stroke="#000" stroke-width="1.1" /><line x1="737.4" y1="658.5" x2="740.9" y2="658.5" stroke="#000" stroke-width="1.1" /><line x1="737.4" y1="643.1" x2="740.9" y2="643.1" stroke="#000" stroke-width="1.1" /><line x1="737.4" y1="627.7" x2="740.9" y2="627.7" stroke="#000" stroke-width="1.1" /><line x1="737.4" y1="612.3" x2="740.9" y2="612.3" stroke="#000" stroke-width="1.1" /><line x1="737.4" y1="596.9" x2="740.9" y2="596.9" stroke="#000" stroke-width="1.1" /><line x1="737.4" y1="581.5" x2="740.9" y2="581.5" stroke="#000" stroke-width="1.1" /><line x1="737.4" y1="566.1" x2="740.9" y2="566.1" stroke="#000" stroke-width="1.1" /><line x1="737.4" y1="550.7" x2="740.9" y2="550.7" stroke="#000" stroke-width="1.1" /><line x1="737.4" y1="535.3" x2="740.9" y2="535.3" stroke="#000" stroke-width="1.1" /><line x1="737.4" y1="519.9" x2="740.9" y2="519.9" stroke="#000" stroke-width="1.1" /><line x1="737.4" y1="504.5" x2="740.9" y2="504.5" stroke="#000" stroke-width="1.1" /><line x1="737.4" y1="489.1" x2="740.9" y2="489.1" stroke="#000" stroke-width="1.1" /><line x1="734.4" y1="689.3" x2="740.9" y2="689.3" stroke="#000" stroke-width="1.1" /><text x="732.9" y="693.6" font-size="12" text-anchor="end" fill="#000" font-weight="normal" >850</text><line x1="734.4" y1="612.3" x2="740.9" y2="612.3" stroke="#000" stroke-width="1.1" /><text x="732.9" y="616.6" font-size="12" text-anchor="end" fill="#000" font-weight="normal" >900</text><line x1="734.4" y1="535.3" x2="740.9" y2="535.3" stroke="#000" stroke-width="1.1" /><text x="732.9" y="539.6" font-size="12" text-anchor="end" fill="#000" font-weight="normal" >950</text><line x1="1182.5" y1="737.58" x2="1186.5" y2="737.58" stroke="#000" stroke-width="1.1" /><line x1="1182.5" y1="730.04" x2="1186.5" y2="730.04" stroke="#000" stroke-width="1.1" /><line x1="1182.5" y1="722.5" x2="1186.5" y2="722.5" stroke="#000" stroke-width="1.1" /><line x1="1182.5" y1="714.96" x2="1186.5" y2="714.96" stroke="#000" stroke-width="1.1" /><line x1="1182.5" y1="707.42" x2="1186.5" y2="707.42" stroke="#000" stroke-width="1.1" /><line x1="1182.5" y1="699.88" x2="1186.5" y2="699.88" stroke="#000" stroke-width="1.1" /><line x1="1182.5" y1="692.34" x2="1186.5" y2="692.34" stroke="#000" stroke-width="1.1" /><line x1="1182.5" y1="684.8" x2="1186.5" y2="684.8" stroke="#000" stroke-width="1.1" /><line x1="1182.5" y1="677.26" x2="1186.5" y2="677.26" stroke="#000" stroke-width="1.1" /><line x1="1182.5" y1="669.72" x2="1186.5" y2="669.72" stroke="#000" stroke-width="1.1" /><line x1="1182.5" y1="662.18" x2="1186.5" y2="662.18" stroke="#000" stroke-width="1.1" /><line x1="1182.5" y1="654.64" x2="1186.5" y2="654.64" stroke="#000" stroke-width="1.1" /><line x1="1182.5" y1="647.1" x2="1186.5" y2="647.1" stroke="#000" stroke-width="1.1" /><line x1="1182.5" y1="639.56" x2="1186.5" y2="639.56" stroke="#000" stroke-width="1.1" /><line x1="1182.5" y1="632.02" x2="1186.5" y2="632.02" stroke="#000" stroke-width="1.1" /><line x1="1182.5" y1="624.48" x2="1186.5" y2="624.48" stroke="#000" stroke-width="1.1" /><line x1="1182.5" y1="616.94" x2="1186.5" y2="616.94" stroke="#000" stroke-width="1.1" /><line x1="1182.5" y1="609.4" x2="1186.5" y2="609.4" stroke="#000" stroke-width="1.1" /><line x1="1182.5" y1="601.86" x2="1186.5" y2="601.86" stroke="#000" stroke-width="1.1" /><line x1="1182.5" y1="594.32" x2="1186.5" y2="594.32" stroke="#000" stroke-width="1.1" /><line x1="1182.5" y1="586.78" x2="1186.5" y2="586.78" stroke="#000" stroke-width="1.1" /><line x1="1182.5" y1="579.24" x2="1186.5" y2="579.24" stroke="#000" stroke-width="1.1" /><line x1="1182.5" y1="571.7" x2="1186.5" y2="571.7" stroke="#000" stroke-width="1.1" /><line x1="1182.5" y1="564.16" x2="1186.5" y2="564.16" stroke="#000" stroke-width="1.1" /><line x1="1182.5" y1="556.62" x2="1186.5" y2="556.62" stroke="#000" stroke-width="1.1" /><line x1="1182.5" y1="549.08" x2="1186.5" y2="549.08" stroke="#000" stroke-width="1.1" /><line x1="1182.5" y1="541.54" x2="1186.5" y2="541.54" stroke="#000" stroke-width="1.1" /><line x1="1182.5" y1="534" x2="1186.5" y2="534" stroke="#000" stroke-width="1.1" /><line x1="1182.5" y1="526.46" x2="1186.5" y2="526.46" stroke="#000" stroke-width="1.1" /><line x1="1182.5" y1="518.92" x2="1186.5" y2="518.92" stroke="#000" stroke-width="1.1" /><line x1="1182.5" y1="511.38" x2="1186.5" y2="511.38" stroke="#000" stroke-width="1.1" /><line x1="1182.5" y1="503.84" x2="1186.5" y2="503.84" stroke="#000" stroke-width="1.1" /><line x1="1182.5" y1="496.3" x2="1186.5" y2="496.3" stroke="#000" stroke-width="1.1" /><line x1="1182.5" y1="488.76" x2="1186.5" y2="488.76" stroke="#000" stroke-width="1.1" /><line x1="1182.5" y1="481.22" x2="1186.5" y2="481.22" stroke="#000" stroke-width="1.1" /><line x1="1182.5" y1="722.5" x2="1190" y2="722.5" stroke="#000" stroke-width="1.1" /><text x="1190.5" y="726.8" font-size="12" text-anchor="start" fill="#000" font-weight="normal" >-3</text><line x1="1182.5" y1="684.8" x2="1190" y2="684.8" stroke="#000" stroke-width="1.1" /><text x="1190.5" y="689.1" font-size="12" text-anchor="start" fill="#000" font-weight="normal" >-2</text><line x1="1182.5" y1="647.1" x2="1190" y2="647.1" stroke="#000" stroke-width="1.1" /><text x="1190.5" y="651.4" font-size="12" text-anchor="start" fill="#000" font-weight="normal" >-1</text><line x1="1182.5" y1="609.4" x2="1190" y2="609.4" stroke="#000" stroke-width="1.1" /><text x="1190.5" y="613.7" font-size="12" text-anchor="start" fill="#000" font-weight="normal" >0</text><line x1="1182.5" y1="571.7" x2="1190" y2="571.7" stroke="#000" stroke-width="1.1" /><text x="1190.5" y="576" font-size="12" text-anchor="start" fill="#000" font-weight="normal" >1</text><line x1="1182.5" y1="534" x2="1190" y2="534" stroke="#000" stroke-width="1.1" /><text x="1190.5" y="538.3" font-size="12" text-anchor="start" fill="#000" font-weight="normal" >2</text><line x1="1182.5" y1="496.3" x2="1190" y2="496.3" stroke="#000" stroke-width="1.1" /><text x="1190.5" y="500.6" font-size="12" text-anchor="start" fill="#000" font-weight="normal" >3</text><text x="961.7" y="459" font-size="17.5" text-anchor="middle" fill="#000" font-weight="normal" >FFT CHART</text><text x="961.7" y="778.8" font-size="12" text-anchor="middle" fill="#000" font-weight="normal" >Time (pixel)</text><text x="709" y="609.5" font-size="12" text-anchor="middle" fill="#000" font-weight="normal" transform="rotate(-90 709 609.5)">Amplitude</text><text x="1215" y="609.5" font-size="12" text-anchor="middle" fill="#000" font-weight="normal" transform="rotate(-90 1215 609.5)">Phase (rad)</text><line x1="1012" y1="501.5" x2="1028" y2="501.5" stroke="#0000ff" stroke-width="1.2" /><text x="1031.5" y="506" font-size="12" text-anchor="start" fill="#000" font-weight="normal" >Amplitude</text><line x1="1111" y1="501.5" x2="1127" y2="501.5" stroke="#008000" stroke-width="1.2" /><text x="1131" y="506" font-size="12" text-anchor="start" fill="#000" font-weight="normal" >Phase</text><text x="1337.4" y="262" font-size="12.2" font-weight="bold" text-anchor="middle" fill="#111">Phase</text><circle cx="1337" cy="349" r="80" fill="url(#ring)"/><circle cx="1337" cy="349" r="75.5" fill="url(#face)"/><line x1="1295.27" y1="406.44" x2="1297.32" y2="403.61" stroke="#b0b0b0" stroke-width="1.2"/><line x1="1289.49" y1="401.76" x2="1291.83" y2="399.16" stroke="#b0b0b0" stroke-width="1.2"/><line x1="1284.24" y1="396.51" x2="1286.84" y2="394.17" stroke="#b0b0b0" stroke-width="1.2"/><line x1="1279.56" y1="390.73" x2="1282.39" y2="388.68" stroke="#b0b0b0" stroke-width="1.2"/><line x1="1272.14" y1="377.88" x2="1275.34" y2="376.45" stroke="#b0b0b0" stroke-width="1.2"/><line x1="1269.47" y1="370.94" x2="1272.8" y2="369.86" stroke="#b0b0b0" stroke-width="1.2"/><line x1="1267.55" y1="363.76" x2="1270.98" y2="363.03" stroke="#b0b0b0" stroke-width="1.2"/><line x1="1266.39" y1="356.42" x2="1269.87" y2="356.06" stroke="#b0b0b0" stroke-width="1.2"/><line x1="1266.39" y1="341.58" x2="1269.87" y2="341.94" stroke="#b0b0b0" stroke-width="1.2"/><line x1="1267.55" y1="334.24" x2="1270.98" y2="334.97" stroke="#b0b0b0" stroke-width="1.2"/><line x1="1269.47" y1="327.06" x2="1272.8" y2="328.14" stroke="#b0b0b0" stroke-width="1.2"/><line x1="1272.14" y1="320.12" x2="1275.34" y2="321.55" stroke="#b0b0b0" stroke-width="1.2"/><line x1="1279.56" y1="307.27" x2="1282.39" y2="309.32" stroke="#b0b0b0" stroke-width="1.2"/><line x1="1284.24" y1="301.49" x2="1286.84" y2="303.83" stroke="#b0b0b0" stroke-width="1.2"/><line x1="1289.49" y1="296.24" x2="1291.83" y2="298.84" stroke="#b0b0b0" stroke-width="1.2"/><line x1="1295.27" y1="291.56" x2="1297.32" y2="294.39" stroke="#b0b0b0" stroke-width="1.2"/><line x1="1308.12" y1="284.14" x2="1309.55" y2="287.34" stroke="#b0b0b0" stroke-width="1.2"/><line x1="1315.06" y1="281.47" x2="1316.14" y2="284.8" stroke="#b0b0b0" stroke-width="1.2"/><line x1="1322.24" y1="279.55" x2="1322.97" y2="282.98" stroke="#b0b0b0" stroke-width="1.2"/><line x1="1329.58" y1="278.39" x2="1329.94" y2="281.87" stroke="#b0b0b0" stroke-width="1.2"/><line x1="1344.42" y1="278.39" x2="1344.06" y2="281.87" stroke="#b0b0b0" stroke-width="1.2"/><line x1="1351.76" y1="279.55" x2="1351.03" y2="282.98" stroke="#b0b0b0" stroke-width="1.2"/><line x1="1358.94" y1="281.47" x2="1357.86" y2="284.8" stroke="#b0b0b0" stroke-width="1.2"/><line x1="1365.88" y1="284.14" x2="1364.45" y2="287.34" stroke="#b0b0b0" stroke-width="1.2"/><line x1="1378.73" y1="291.56" x2="1376.68" y2="294.39" stroke="#b0b0b0" stroke-width="1.2"/><line x1="1384.51" y1="296.24" x2="1382.17" y2="298.84" stroke="#b0b0b0" stroke-width="1.2"/><line x1="1389.76" y1="301.49" x2="1387.16" y2="303.83" stroke="#b0b0b0" stroke-width="1.2"/><line x1="1394.44" y1="307.27" x2="1391.61" y2="309.32" stroke="#b0b0b0" stroke-width="1.2"/><line x1="1401.86" y1="320.12" x2="1398.66" y2="321.55" stroke="#b0b0b0" stroke-width="1.2"/><line x1="1404.53" y1="327.06" x2="1401.2" y2="328.14" stroke="#b0b0b0" stroke-width="1.2"/><line x1="1406.45" y1="334.24" x2="1403.02" y2="334.97" stroke="#b0b0b0" stroke-width="1.2"/><line x1="1407.61" y1="341.58" x2="1404.13" y2="341.94" stroke="#b0b0b0" stroke-width="1.2"/><line x1="1407.61" y1="356.42" x2="1404.13" y2="356.06" stroke="#b0b0b0" stroke-width="1.2"/><line x1="1406.45" y1="363.76" x2="1403.02" y2="363.03" stroke="#b0b0b0" stroke-width="1.2"/><line x1="1404.53" y1="370.94" x2="1401.2" y2="369.86" stroke="#b0b0b0" stroke-width="1.2"/><line x1="1401.86" y1="377.88" x2="1398.66" y2="376.45" stroke="#b0b0b0" stroke-width="1.2"/><line x1="1394.44" y1="390.73" x2="1391.61" y2="388.68" stroke="#b0b0b0" stroke-width="1.2"/><line x1="1389.76" y1="396.51" x2="1387.16" y2="394.17" stroke="#b0b0b0" stroke-width="1.2"/><line x1="1384.51" y1="401.76" x2="1382.17" y2="399.16" stroke="#b0b0b0" stroke-width="1.2"/><line x1="1378.73" y1="406.44" x2="1376.68" y2="403.61" stroke="#b0b0b0" stroke-width="1.2"/><line x1="1299.5" y1="413.95" x2="1304.5" y2="405.29" stroke="#a8a8a8" stroke-width="3"/><text x="1312.4" y="393.4" font-size="10" text-anchor="middle" fill="#111">-3.5</text><line x1="1272.05" y1="386.5" x2="1280.71" y2="381.5" stroke="#a8a8a8" stroke-width="3"/><text x="1294.1" y="375.1" font-size="10" text-anchor="middle" fill="#111">-2.8</text><line x1="1262" y1="349" x2="1272" y2="349" stroke="#a8a8a8" stroke-width="3"/><text x="1287.4" y="350.1" font-size="10" text-anchor="middle" fill="#111">-2.1</text><line x1="1272.05" y1="311.5" x2="1280.71" y2="316.5" stroke="#a8a8a8" stroke-width="3"/><text x="1294.1" y="325.1" font-size="10" text-anchor="middle" fill="#111">-1.4</text><line x1="1299.5" y1="284.05" x2="1304.5" y2="292.71" stroke="#a8a8a8" stroke-width="3"/><text x="1312.4" y="306.8" font-size="10" text-anchor="middle" fill="#111">-0.7</text><line x1="1337" y1="274" x2="1337" y2="284" stroke="#a8a8a8" stroke-width="3"/><text x="1337.4" y="300.1" font-size="10" text-anchor="middle" fill="#111">0</text><line x1="1374.5" y1="284.05" x2="1369.5" y2="292.71" stroke="#a8a8a8" stroke-width="3"/><text x="1362.4" y="306.8" font-size="10" text-anchor="middle" fill="#111">0.7</text><line x1="1401.95" y1="311.5" x2="1393.29" y2="316.5" stroke="#a8a8a8" stroke-width="3"/><text x="1380.7" y="325.1" font-size="10" text-anchor="middle" fill="#111">1.4</text><line x1="1412" y1="349" x2="1402" y2="349" stroke="#a8a8a8" stroke-width="3"/><text x="1387.4" y="350.1" font-size="10" text-anchor="middle" fill="#111">2.1</text><line x1="1401.95" y1="386.5" x2="1393.29" y2="381.5" stroke="#a8a8a8" stroke-width="3"/><text x="1380.7" y="375.1" font-size="10" text-anchor="middle" fill="#111">2.8</text><line x1="1374.5" y1="413.95" x2="1369.5" y2="405.29" stroke="#a8a8a8" stroke-width="3"/><text x="1362.4" y="393.4" font-size="10" text-anchor="middle" fill="#111">3.5</text><text x="1337" y="383.4" font-size="12.4" font-weight="bold" text-anchor="middle" fill="#222">-0.068</text><polygon points="1341.97,319.92 1340.94,349.67 1333.06,348.33" fill="#e8141c"/><circle cx="1337.5" cy="349.4" r="12.4" fill="url(#hubring)"/><circle cx="1337.5" cy="349.2" r="8.4" fill="url(#hub)"/><text x="1341.3" y="487" font-size="12.2" font-weight="bold" text-anchor="middle" fill="#111">RMS Phase</text><circle cx="1337" cy="574" r="80" fill="url(#ring)"/><circle cx="1337" cy="574" r="75.5" fill="url(#face)"/><line x1="1295.27" y1="631.44" x2="1297.32" y2="628.61" stroke="#b0b0b0" stroke-width="1.2"/><line x1="1289.49" y1="626.76" x2="1291.83" y2="624.16" stroke="#b0b0b0" stroke-width="1.2"/><line x1="1284.24" y1="621.51" x2="1286.84" y2="619.17" stroke="#b0b0b0" stroke-width="1.2"/><line x1="1279.56" y1="615.73" x2="1282.39" y2="613.68" stroke="#b0b0b0" stroke-width="1.2"/><line x1="1272.14" y1="602.88" x2="1275.34" y2="601.45" stroke="#b0b0b0" stroke-width="1.2"/><line x1="1269.47" y1="595.94" x2="1272.8" y2="594.86" stroke="#b0b0b0" stroke-width="1.2"/><line x1="1267.55" y1="588.76" x2="1270.98" y2="588.03" stroke="#b0b0b0" stroke-width="1.2"/><line x1="1266.39" y1="581.42" x2="1269.87" y2="581.06" stroke="#b0b0b0" stroke-width="1.2"/><line x1="1266.39" y1="566.58" x2="1269.87" y2="566.94" stroke="#b0b0b0" stroke-width="1.2"/><line x1="1267.55" y1="559.24" x2="1270.98" y2="559.97" stroke="#b0b0b0" stroke-width="1.2"/><line x1="1269.47" y1="552.06" x2="1272.8" y2="553.14" stroke="#b0b0b0" stroke-width="1.2"/><line x1="1272.14" y1="545.12" x2="1275.34" y2="546.55" stroke="#b0b0b0" stroke-width="1.2"/><line x1="1279.56" y1="532.27" x2="1282.39" y2="534.32" stroke="#b0b0b0" stroke-width="1.2"/><line x1="1284.24" y1="526.49" x2="1286.84" y2="528.83" stroke="#b0b0b0" stroke-width="1.2"/><line x1="1289.49" y1="521.24" x2="1291.83" y2="523.84" stroke="#b0b0b0" stroke-width="1.2"/><line x1="1295.27" y1="516.56" x2="1297.32" y2="519.39" stroke="#b0b0b0" stroke-width="1.2"/><line x1="1308.12" y1="509.14" x2="1309.55" y2="512.34" stroke="#b0b0b0" stroke-width="1.2"/><line x1="1315.06" y1="506.47" x2="1316.14" y2="509.8" stroke="#b0b0b0" stroke-width="1.2"/><line x1="1322.24" y1="504.55" x2="1322.97" y2="507.98" stroke="#b0b0b0" stroke-width="1.2"/><line x1="1329.58" y1="503.39" x2="1329.94" y2="506.87" stroke="#b0b0b0" stroke-width="1.2"/><line x1="1344.42" y1="503.39" x2="1344.06" y2="506.87" stroke="#b0b0b0" stroke-width="1.2"/><line x1="1351.76" y1="504.55" x2="1351.03" y2="507.98" stroke="#b0b0b0" stroke-width="1.2"/><line x1="1358.94" y1="506.47" x2="1357.86" y2="509.8" stroke="#b0b0b0" stroke-width="1.2"/><line x1="1365.88" y1="509.14" x2="1364.45" y2="512.34" stroke="#b0b0b0" stroke-width="1.2"/><line x1="1378.73" y1="516.56" x2="1376.68" y2="519.39" stroke="#b0b0b0" stroke-width="1.2"/><line x1="1384.51" y1="521.24" x2="1382.17" y2="523.84" stroke="#b0b0b0" stroke-width="1.2"/><line x1="1389.76" y1="526.49" x2="1387.16" y2="528.83" stroke="#b0b0b0" stroke-width="1.2"/><line x1="1394.44" y1="532.27" x2="1391.61" y2="534.32" stroke="#b0b0b0" stroke-width="1.2"/><line x1="1401.86" y1="545.12" x2="1398.66" y2="546.55" stroke="#b0b0b0" stroke-width="1.2"/><line x1="1404.53" y1="552.06" x2="1401.2" y2="553.14" stroke="#b0b0b0" stroke-width="1.2"/><line x1="1406.45" y1="559.24" x2="1403.02" y2="559.97" stroke="#b0b0b0" stroke-width="1.2"/><line x1="1407.61" y1="566.58" x2="1404.13" y2="566.94" stroke="#b0b0b0" stroke-width="1.2"/><line x1="1407.61" y1="581.42" x2="1404.13" y2="581.06" stroke="#b0b0b0" stroke-width="1.2"/><line x1="1406.45" y1="588.76" x2="1403.02" y2="588.03" stroke="#b0b0b0" stroke-width="1.2"/><line x1="1404.53" y1="595.94" x2="1401.2" y2="594.86" stroke="#b0b0b0" stroke-width="1.2"/><line x1="1401.86" y1="602.88" x2="1398.66" y2="601.45" stroke="#b0b0b0" stroke-width="1.2"/><line x1="1394.44" y1="615.73" x2="1391.61" y2="613.68" stroke="#b0b0b0" stroke-width="1.2"/><line x1="1389.76" y1="621.51" x2="1387.16" y2="619.17" stroke="#b0b0b0" stroke-width="1.2"/><line x1="1384.51" y1="626.76" x2="1382.17" y2="624.16" stroke="#b0b0b0" stroke-width="1.2"/><line x1="1378.73" y1="631.44" x2="1376.68" y2="628.61" stroke="#b0b0b0" stroke-width="1.2"/><line x1="1299.5" y1="638.95" x2="1304.5" y2="630.29" stroke="#a8a8a8" stroke-width="3"/><text x="1312.4" y="618.4" font-size="10" text-anchor="middle" fill="#111">0</text><line x1="1272.05" y1="611.5" x2="1280.71" y2="606.5" stroke="#a8a8a8" stroke-width="3"/><text x="1294.1" y="600.1" font-size="10" text-anchor="middle" fill="#111">0.1</text><line x1="1262" y1="574" x2="1272" y2="574" stroke="#a8a8a8" stroke-width="3"/><text x="1287.4" y="575.1" font-size="10" text-anchor="middle" fill="#111">0.2</text><line x1="1272.05" y1="536.5" x2="1280.71" y2="541.5" stroke="#a8a8a8" stroke-width="3"/><text x="1294.1" y="550.1" font-size="10" text-anchor="middle" fill="#111">0.3</text><line x1="1299.5" y1="509.05" x2="1304.5" y2="517.71" stroke="#a8a8a8" stroke-width="3"/><text x="1312.4" y="531.8" font-size="10" text-anchor="middle" fill="#111">0.4</text><line x1="1337" y1="499" x2="1337" y2="509" stroke="#a8a8a8" stroke-width="3"/><text x="1337.4" y="525.1" font-size="10" text-anchor="middle" fill="#111">0.5</text><line x1="1374.5" y1="509.05" x2="1369.5" y2="517.71" stroke="#a8a8a8" stroke-width="3"/><text x="1362.4" y="531.8" font-size="10" text-anchor="middle" fill="#111">0.6</text><line x1="1401.95" y1="536.5" x2="1393.29" y2="541.5" stroke="#a8a8a8" stroke-width="3"/><text x="1380.7" y="550.1" font-size="10" text-anchor="middle" fill="#111">0.7</text><line x1="1412" y1="574" x2="1402" y2="574" stroke="#a8a8a8" stroke-width="3"/><text x="1387.4" y="575.1" font-size="10" text-anchor="middle" fill="#111">0.8</text><line x1="1401.95" y1="611.5" x2="1393.29" y2="606.5" stroke="#a8a8a8" stroke-width="3"/><text x="1380.7" y="600.1" font-size="10" text-anchor="middle" fill="#111">0.9</text><line x1="1374.5" y1="638.95" x2="1369.5" y2="630.29" stroke="#a8a8a8" stroke-width="3"/><text x="1362.4" y="618.4" font-size="10" text-anchor="middle" fill="#111">1</text><text x="1340" y="611.5" font-size="12.4" font-weight="bold" text-anchor="middle" fill="#222">0.141</text><polygon points="1302.57,583.81 1335.9,570.15 1338.1,577.85" fill="#e8141c"/><circle cx="1337.5" cy="574.4" r="12.4" fill="url(#hubring)"/><circle cx="1337.5" cy="574.2" r="8.4" fill="url(#hub)"/><polyline points="83.5,92.6 87.5,89.4 91.5,92.6" fill="none" stroke="#000" stroke-width="2.1" stroke-linejoin="miter"/><polyline points="83.5,100.2 87.5,103.4 91.5,100.2" fill="none" stroke="#000" stroke-width="2.1" stroke-linejoin="miter"/><polyline points="1318.5,167.6 1322.5,164.4 1326.5,167.6" fill="none" stroke="#000" stroke-width="2.1" stroke-linejoin="miter"/><polyline points="1318.5,175.2 1322.5,178.4 1326.5,175.2" fill="none" stroke="#000" stroke-width="2.1" stroke-linejoin="miter"/><circle cx="1399.5" cy="174.5" r="12.5" fill="#008000"/><circle cx="1399.5" cy="174.5" r="2" fill="#2a8a2a"/><circle cx="15.2" cy="13.7" r="13.7" fill="#1d4d70"/><circle cx="15.3" cy="15.8" r="10" fill="url(#sph)"/><line x1="1320" y1="13.5" x2="1330" y2="13.5" stroke="#fff" stroke-width="1"/><rect x="1366.5" y="9.5" width="9" height="9" fill="none" stroke="#fff" stroke-width="1"/><path d="M1412,9 L1422,19 M1422,9 L1412,19" stroke="#fff" stroke-width="1"/><rect x="0" y="29" width="1" height="770" fill="#a0a0a0"/><rect x="0" y="0" width="1" height="29" fill="#2c62d2"/><line x1="0" y1="798.5" x2="1440" y2="798.5" stroke="#a4a4a4" stroke-width="1"/><line x1="1439.5" y1="29" x2="1439.5" y2="799" stroke="#b4b4b4" stroke-width="1"/><rect x="1437" y="787" width="1.5" height="1.5" fill="#9aa3bd"/><rect x="1434" y="790" width="1.5" height="1.5" fill="#9aa3bd"/><rect x="1437" y="790" width="1.5" height="1.5" fill="#9aa3bd"/><rect x="1431" y="793" width="1.5" height="1.5" fill="#9aa3bd"/><rect x="1434" y="793" width="1.5" height="1.5" fill="#9aa3bd"/><rect x="1437" y="793" width="1.5" height="1.5" fill="#9aa3bd"/><rect x="1428" y="796" width="1.5" height="1.5" fill="#9aa3bd"/><rect x="1431" y="796" width="1.5" height="1.5" fill="#9aa3bd"/><rect x="1434" y="796" width="1.5" height="1.5" fill="#9aa3bd"/><rect x="1437" y="796" width="1.5" height="1.5" fill="#9aa3bd"/>
</svg>
</body></html>
